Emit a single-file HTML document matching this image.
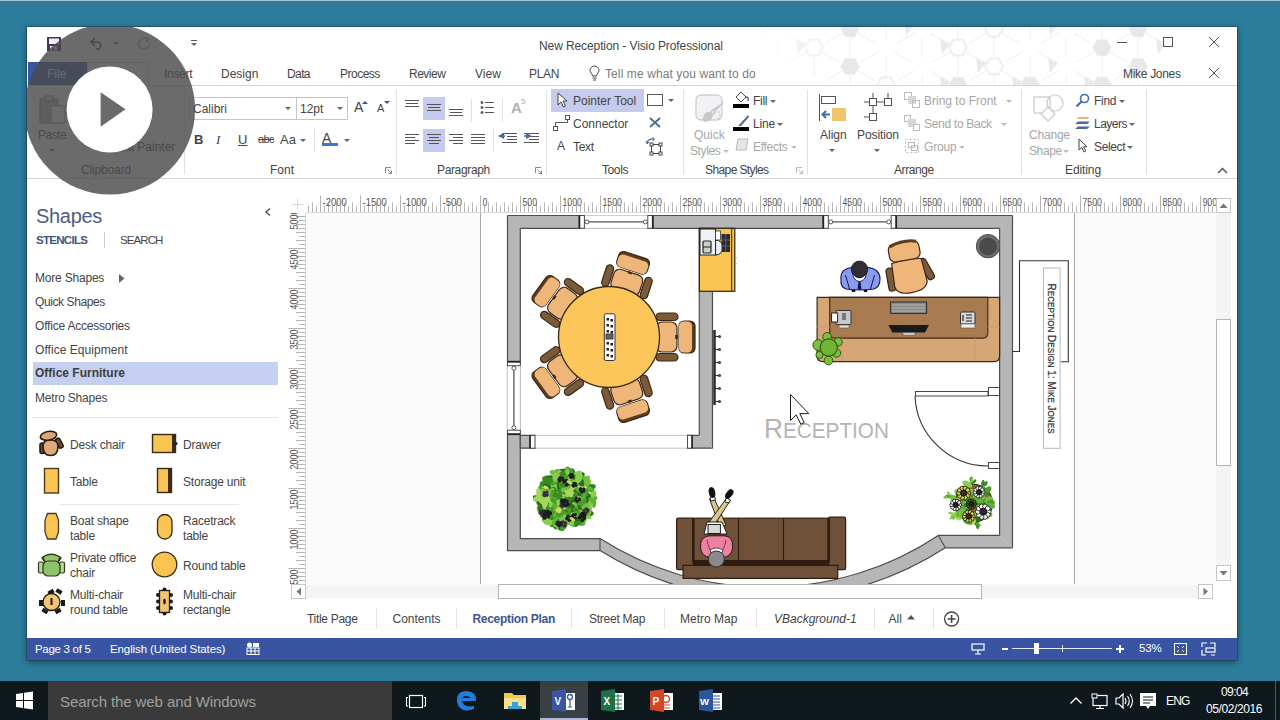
<!DOCTYPE html>
<html><head><meta charset="utf-8">
<style>
*{box-sizing:border-box}
html,body{margin:0;padding:0}
body{width:1280px;height:720px;overflow:hidden;position:relative;background:#2c7c9c;font-family:"Liberation Sans",sans-serif;color:#444}
.a{position:absolute}
.t{position:absolute;white-space:nowrap;line-height:1;font-size:12px;color:#444}
.g{color:#a6a6a6}
.sep{position:absolute;width:1px;background:#e1e1e1}
svg{position:absolute;overflow:visible}
.dd{position:absolute;width:0;height:0;border-left:3px solid transparent;border-right:3px solid transparent;border-top:3px solid #666}
</style></head><body>
<div class="a" style="left:0;top:0;width:1280px;height:1px;background:#9ccadc"></div>
<div class="a" style="left:0;top:1px;width:1280px;height:4px;background:#3a7792"></div>
<div class="a" style="left:0;top:5px;width:1280px;height:1px;background:#2a79a2"></div>
<!-- window -->
<div class="a" style="left:27px;top:27px;width:1210px;height:633px;background:#fff;box-shadow:0 0 0 1px rgba(20,40,50,.35),0 2px 7px rgba(0,0,0,.45)"></div>

<svg style="left:740px;top:27px" width="497" height="58" viewBox="740 27 497 58"><defs><clipPath id="hx"><rect x="740" y="27" width="497" height="58"/></clipPath><linearGradient id="hf" x1="0" x2="1"><stop offset="0" stop-color="#fff" stop-opacity="1"/><stop offset="0.2" stop-color="#fff" stop-opacity="0"/></linearGradient></defs><g clip-path="url(#hx)"><polygon points="751.0,10.0 746.5,17.8 737.5,17.8 733.0,10.0 737.5,2.2 746.5,2.2" fill="none" stroke="#eeeeee" stroke-width="2"/><polygon points="760,19.4 770,24.8 762,35.4" fill="#e9e9e9"/><polygon points="796,38.20000000000001 806,43.60000000000001 798,54.20000000000001" fill="#e9e9e9"/><polygon points="823.0,47.6 818.5,55.4 809.5,55.4 805.0,47.6 809.5,39.8 818.5,39.8" fill="none" stroke="#eeeeee" stroke-width="2"/><polygon points="859.5,28.8 854.8,37.0 845.2,37.0 840.5,28.8 845.2,20.6 854.8,20.6" fill="#e8e8e8"/><polygon points="859.5,66.4 854.8,74.6 845.2,74.6 840.5,66.4 845.2,58.2 854.8,58.2" fill="#e8e8e8"/><polygon points="895.5,10.0 890.8,18.2 881.2,18.2 876.5,10.0 881.2,1.8 890.8,1.8" fill="#e8e8e8"/><polygon points="904,19.4 914,24.8 906,35.4" fill="#e9e9e9"/><polygon points="895.0,10.0 890.5,17.8 881.5,17.8 877.0,10.0 881.5,2.2 890.5,2.2" fill="none" stroke="#eeeeee" stroke-width="2"/><polygon points="895.5,10.0 890.8,18.2 881.2,18.2 876.5,10.0 881.2,1.8 890.8,1.8" fill="#e8e8e8"/><polygon points="904,19.4 914,24.8 906,35.4" fill="#e9e9e9"/><polygon points="895.0,85.2 890.5,93.0 881.5,93.0 877.0,85.2 881.5,77.4 890.5,77.4" fill="none" stroke="#eeeeee" stroke-width="2"/><polygon points="940,38.199999999999996 950,43.599999999999994 942,54.199999999999996" fill="#e9e9e9"/><polygon points="940,75.80000000000001 950,81.2 942,91.80000000000001" fill="#e9e9e9"/><polygon points="931.5,104.0 926.8,112.2 917.2,112.2 912.5,104.0 917.2,95.8 926.8,95.8" fill="#e8e8e8"/><polygon points="940,113.4 950,118.8 942,129.4" fill="#e9e9e9"/><polygon points="967.0,10.0 962.5,17.8 953.5,17.8 949.0,10.0 953.5,2.2 962.5,2.2" fill="none" stroke="#eeeeee" stroke-width="2"/><polygon points="967.5,10.0 962.8,18.2 953.2,18.2 948.5,10.0 953.2,1.8 962.8,1.8" fill="#e8e8e8"/><polygon points="967.0,47.6 962.5,55.4 953.5,55.4 949.0,47.6 953.5,39.8 962.5,39.8" fill="none" stroke="#eeeeee" stroke-width="2"/><polygon points="976,57.0 986,62.400000000000006 978,73.0" fill="#e9e9e9"/><polygon points="967.5,85.2 962.8,93.4 953.2,93.4 948.5,85.2 953.2,77.0 962.8,77.0" fill="#e8e8e8"/><polygon points="976,94.60000000000001 986,100.0 978,110.60000000000001" fill="#e9e9e9"/><polygon points="1003.0,28.8 998.5,36.6 989.5,36.6 985.0,28.8 989.5,21.0 998.5,21.0" fill="none" stroke="#eeeeee" stroke-width="2"/><polygon points="1003.0,66.4 998.5,74.2 989.5,74.2 985.0,66.4 989.5,58.6 998.5,58.6" fill="none" stroke="#eeeeee" stroke-width="2"/><polygon points="1012,75.80000000000001 1022,81.2 1014,91.80000000000001" fill="#e9e9e9"/><polygon points="1003.5,104.0 998.8,112.2 989.2,112.2 984.5,104.0 989.2,95.8 998.8,95.8" fill="#e8e8e8"/><polygon points="1039.0,10.0 1034.5,17.8 1025.5,17.8 1021.0,10.0 1025.5,2.2 1034.5,2.2" fill="none" stroke="#eeeeee" stroke-width="2"/><polygon points="1048,19.4 1058,24.8 1050,35.4" fill="#e9e9e9"/><polygon points="1048,57.0 1058,62.400000000000006 1050,73.0" fill="#e9e9e9"/><polygon points="1039.0,85.2 1034.5,93.0 1025.5,93.0 1021.0,85.2 1025.5,77.4 1034.5,77.4" fill="none" stroke="#eeeeee" stroke-width="2"/><polygon points="1039.5,85.2 1034.8,93.4 1025.2,93.4 1020.5,85.2 1025.2,77.0 1034.8,77.0" fill="#e8e8e8"/><polygon points="1039.5,85.2 1034.8,93.4 1025.2,93.4 1020.5,85.2 1025.2,77.0 1034.8,77.0" fill="#e8e8e8"/><polygon points="1084,75.80000000000001 1094,81.2 1086,91.80000000000001" fill="#e9e9e9"/><polygon points="1075.0,104.0 1070.5,111.8 1061.5,111.8 1057.0,104.0 1061.5,96.2 1070.5,96.2" fill="none" stroke="#eeeeee" stroke-width="2"/><polygon points="1111.0,10.0 1106.5,17.8 1097.5,17.8 1093.0,10.0 1097.5,2.2 1106.5,2.2" fill="none" stroke="#eeeeee" stroke-width="2"/><polygon points="1111.5,47.6 1106.8,55.8 1097.2,55.8 1092.5,47.6 1097.2,39.4 1106.8,39.4" fill="#e8e8e8"/><polygon points="1120,94.60000000000002 1130,100.00000000000001 1122,110.60000000000002" fill="#e9e9e9"/><polygon points="1111.0,85.2 1106.5,93.0 1097.5,93.0 1093.0,85.2 1097.5,77.4 1106.5,77.4" fill="none" stroke="#eeeeee" stroke-width="2"/><polygon points="1111.5,85.2 1106.8,93.4 1097.2,93.4 1092.5,85.2 1097.2,77.0 1106.8,77.0" fill="#e8e8e8"/><polygon points="1147.5,28.8 1142.8,37.0 1133.2,37.0 1128.5,28.8 1133.2,20.6 1142.8,20.6" fill="#e8e8e8"/><polygon points="1156,38.199999999999996 1166,43.599999999999994 1158,54.199999999999996" fill="#e9e9e9"/><polygon points="1147.5,66.4 1142.8,74.6 1133.2,74.6 1128.5,66.4 1133.2,58.2 1142.8,58.2" fill="#e8e8e8"/><polygon points="1147.5,104.0 1142.8,112.2 1133.2,112.2 1128.5,104.0 1133.2,95.8 1142.8,95.8" fill="#e8e8e8"/><polygon points="1156,113.4 1166,118.8 1158,129.4" fill="#e9e9e9"/><polygon points="1147.0,104.0 1142.5,111.8 1133.5,111.8 1129.0,104.0 1133.5,96.2 1142.5,96.2" fill="none" stroke="#eeeeee" stroke-width="2"/><polygon points="1147.5,104.0 1142.8,112.2 1133.2,112.2 1128.5,104.0 1133.2,95.8 1142.8,95.8" fill="#e8e8e8"/><polygon points="1147.0,104.0 1142.5,111.8 1133.5,111.8 1129.0,104.0 1133.5,96.2 1142.5,96.2" fill="none" stroke="#eeeeee" stroke-width="2"/><path d="M749.8 14.5L766.8 24.3M742.0 19.0L742.0 38.6M734.2 14.5L717.2 24.3M785.8 33.3L802.8 43.1M778.0 37.8L778.0 57.4M770.2 33.3L753.2 43.1M821.8 52.1L838.8 61.9M814.0 56.6L814.0 76.2M806.2 52.1L789.2 61.9M857.8 33.3L874.8 43.1M850.0 37.8L850.0 57.4M842.2 33.3L825.2 43.1M857.8 70.9L874.8 80.7M850.0 75.4L850.0 95.0M842.2 70.9L825.2 80.7M893.8 14.5L910.8 24.3M886.0 19.0L886.0 38.6M878.2 14.5L861.2 24.3M893.8 14.5L910.8 24.3M886.0 19.0L886.0 38.6M878.2 14.5L861.2 24.3M893.8 14.5L910.8 24.3M886.0 19.0L886.0 38.6M878.2 14.5L861.2 24.3M893.8 52.1L910.8 61.9M886.0 56.6L886.0 76.2M878.2 52.1L861.2 61.9M893.8 89.7L910.8 99.5M886.0 94.2L886.0 113.8M878.2 89.7L861.2 99.5M929.8 33.3L946.8 43.1M922.0 37.8L922.0 57.4M914.2 33.3L897.2 43.1M929.8 70.9L946.8 80.7M922.0 75.4L922.0 95.0M914.2 70.9L897.2 80.7M929.8 108.5L946.8 118.3M922.0 113.0L922.0 132.6M914.2 108.5L897.2 118.3M965.8 14.5L982.8 24.3M958.0 19.0L958.0 38.6M950.2 14.5L933.2 24.3M965.8 14.5L982.8 24.3M958.0 19.0L958.0 38.6M950.2 14.5L933.2 24.3M965.8 14.5L982.8 24.3M958.0 19.0L958.0 38.6M950.2 14.5L933.2 24.3M965.8 52.1L982.8 61.9M958.0 56.6L958.0 76.2M950.2 52.1L933.2 61.9M965.8 89.7L982.8 99.5M958.0 94.2L958.0 113.8M950.2 89.7L933.2 99.5M965.8 89.7L982.8 99.5M958.0 94.2L958.0 113.8M950.2 89.7L933.2 99.5M1001.8 33.3L1018.8 43.1M994.0 37.8L994.0 57.4M986.2 33.3L969.2 43.1M1001.8 70.9L1018.8 80.7M994.0 75.4L994.0 95.0M986.2 70.9L969.2 80.7M1001.8 108.5L1018.8 118.3M994.0 113.0L994.0 132.6M986.2 108.5L969.2 118.3M1001.8 108.5L1018.8 118.3M994.0 113.0L994.0 132.6M986.2 108.5L969.2 118.3M1037.8 14.5L1054.8 24.3M1030.0 19.0L1030.0 38.6M1022.2 14.5L1005.2 24.3M1037.8 14.5L1054.8 24.3M1030.0 19.0L1030.0 38.6M1022.2 14.5L1005.2 24.3M1037.8 52.1L1054.8 61.9M1030.0 56.6L1030.0 76.2M1022.2 52.1L1005.2 61.9M1037.8 89.7L1054.8 99.5M1030.0 94.2L1030.0 113.8M1022.2 89.7L1005.2 99.5M1037.8 89.7L1054.8 99.5M1030.0 94.2L1030.0 113.8M1022.2 89.7L1005.2 99.5M1037.8 89.7L1054.8 99.5M1030.0 94.2L1030.0 113.8M1022.2 89.7L1005.2 99.5M1073.8 33.3L1090.8 43.1M1066.0 37.8L1066.0 57.4M1058.2 33.3L1041.2 43.1M1073.8 70.9L1090.8 80.7M1066.0 75.4L1066.0 95.0M1058.2 70.9L1041.2 80.7M1073.8 108.5L1090.8 118.3M1066.0 113.0L1066.0 132.6M1058.2 108.5L1041.2 118.3M1073.8 108.5L1090.8 118.3M1066.0 113.0L1066.0 132.6M1058.2 108.5L1041.2 118.3M1073.8 108.5L1090.8 118.3M1066.0 113.0L1066.0 132.6M1058.2 108.5L1041.2 118.3M1109.8 14.5L1126.8 24.3M1102.0 19.0L1102.0 38.6M1094.2 14.5L1077.2 24.3M1109.8 52.1L1126.8 61.9M1102.0 56.6L1102.0 76.2M1094.2 52.1L1077.2 61.9M1109.8 89.7L1126.8 99.5M1102.0 94.2L1102.0 113.8M1094.2 89.7L1077.2 99.5M1109.8 89.7L1126.8 99.5M1102.0 94.2L1102.0 113.8M1094.2 89.7L1077.2 99.5M1109.8 89.7L1126.8 99.5M1102.0 94.2L1102.0 113.8M1094.2 89.7L1077.2 99.5M1109.8 89.7L1126.8 99.5M1102.0 94.2L1102.0 113.8M1094.2 89.7L1077.2 99.5M1145.8 33.3L1162.8 43.1M1138.0 37.8L1138.0 57.4M1130.2 33.3L1113.2 43.1M1145.8 70.9L1162.8 80.7M1138.0 75.4L1138.0 95.0M1130.2 70.9L1113.2 80.7M1145.8 108.5L1162.8 118.3M1138.0 113.0L1138.0 132.6M1130.2 108.5L1113.2 118.3M1145.8 108.5L1162.8 118.3M1138.0 113.0L1138.0 132.6M1130.2 108.5L1113.2 118.3M1145.8 108.5L1162.8 118.3M1138.0 113.0L1138.0 132.6M1130.2 108.5L1113.2 118.3M1145.8 108.5L1162.8 118.3M1138.0 113.0L1138.0 132.6M1130.2 108.5L1113.2 118.3" stroke="#f2f2f2" stroke-width="1.2" fill="none"/><rect x="740" y="27" width="497" height="58" fill="url(#hf)"/></g></svg>

<!-- ===== TITLE BAR ===== -->
<svg style="left:47px;top:37px" width="14" height="14" viewBox="0 0 14 14"><rect x="0.75" y="0.75" width="12.5" height="12.5" fill="#45365e" stroke="#45365e" stroke-width="1.5"/><rect x="2" y="1.5" width="10" height="5.5" fill="#f4f0fa"/><rect x="3" y="9" width="7.5" height="4.5" fill="#e8e4ee"/><rect x="5" y="10.5" width="2" height="3" fill="#45365e"/></svg>
<svg style="left:89px;top:37px" width="16" height="13" viewBox="0 0 16 13"><path d="M3 5 H10 A4.5 4.5 0 0 1 10 12 H7" fill="none" stroke="#444" stroke-width="1.6"/><path d="M6 1 L2 5 L6 9" fill="none" stroke="#444" stroke-width="1.6"/></svg>
<div class="dd" style="left:113px;top:42px"></div>
<svg style="left:137px;top:37px" width="14" height="13" viewBox="0 0 14 13"><path d="M10 2 A5.5 5.5 0 1 0 12.5 6.5" fill="none" stroke="#aaa" stroke-width="1.5"/><path d="M9 0 L12 2.5 L9 5" fill="none" stroke="#aaa" stroke-width="1.4"/></svg>
<div class="a" style="left:191px;top:40px;width:6px;height:1px;background:#555"></div>
<div class="dd" style="left:191px;top:43px"></div>
<div class="t" style="left:539px;top:40px;letter-spacing:-0.1px">New Reception - Visio Professional</div>
<div class="a" style="left:1117px;top:42px;width:10px;height:1px;background:#555"></div>
<div class="a" style="left:1163px;top:37px;width:10px;height:10px;border:1px solid #555"></div>
<svg style="left:1209px;top:37px" width="10" height="10" viewBox="0 0 10 10"><path d="M0 0 L10 10 M10 0 L0 10" stroke="#555" stroke-width="1"/></svg>

<!-- ===== TABS ===== -->
<div class="a" style="left:28px;top:62px;width:59px;height:23px;background:#3955a3"></div>
<div class="t" style="left:47px;top:68px;color:#fff">File</div>
<div class="a" style="left:87px;top:62px;width:62px;height:24px;border:1px solid #d4d4d4;border-bottom:none;background:#fff"></div>
<div class="t" style="left:100px;top:68px;color:#3955a3">Home</div>
<div class="t" style="left:164px;top:68px;letter-spacing:-0.3px">Insert</div>
<div class="t" style="left:221px;top:68px">Design</div>
<div class="t" style="left:287px;top:68px;letter-spacing:-0.6px">Data</div>
<div class="t" style="left:340px;top:68px;letter-spacing:-0.5px">Process</div>
<div class="t" style="left:409px;top:68px;letter-spacing:-0.5px">Review</div>
<div class="t" style="left:475px;top:68px">View</div>
<div class="t" style="left:529px;top:68px;letter-spacing:-0.3px">PLAN</div>
<svg style="left:589px;top:66px" width="11" height="15" viewBox="0 0 11 15"><path d="M3.5 10 C3.5 7.5 1 6.5 1 4.5 A4.5 4.5 0 0 1 10 4.5 C10 6.5 7.5 7.5 7.5 10 Z" fill="none" stroke="#444" stroke-width="1"/><path d="M3.5 12 H7.5 M4 14 H7" stroke="#444" stroke-width="1"/></svg>
<div class="t" style="left:605px;top:68px;color:#7a7a7a;letter-spacing:0.1px">Tell me what you want to do</div>
<div class="t" style="left:1123px;top:68px;letter-spacing:-0.3px">Mike Jones</div>
<svg style="left:1209px;top:68px" width="10" height="10" viewBox="0 0 10 10"><path d="M0 0 L10 10 M10 0 L0 10" stroke="#555" stroke-width="1"/></svg>
<div class="a" style="left:27px;top:85px;width:60px;height:1px;background:#d4d4d4"></div>
<div class="a" style="left:149px;top:85px;width:1088px;height:1px;background:#d4d4d4"></div>

<!-- ===== RIBBON ===== -->
<div class="a" style="left:27px;top:178px;width:1210px;height:1px;background:#d4d4d4"></div>
<!-- separators -->
<div class="sep" style="left:184px;top:90px;height:84px"></div>
<div class="sep" style="left:396px;top:90px;height:84px"></div>
<div class="sep" style="left:546px;top:90px;height:84px"></div>
<div class="sep" style="left:683px;top:90px;height:84px"></div>
<div class="sep" style="left:807px;top:90px;height:84px"></div>
<div class="sep" style="left:1021px;top:90px;height:84px"></div>
<div class="sep" style="left:1146px;top:90px;height:84px"></div>

<!-- Clipboard -->
<svg style="left:39px;top:94px" width="28" height="30" viewBox="0 0 28 30"><rect x="1" y="5" width="18" height="24" fill="#b8b8b8" stroke="#888"/><rect x="6" y="2" width="8" height="5" fill="#ddd" stroke="#888"/><rect x="12" y="12" width="14" height="17" fill="#fff" stroke="#888"/></svg>
<div class="t" style="left:38px;top:129px;letter-spacing:-0.5px">Paste</div>
<div class="dd" style="left:49px;top:149px"></div>
<div class="t" style="left:101px;top:95px">Cut</div>
<div class="t" style="left:101px;top:118px">Copy</div>
<div class="t" style="left:96px;top:141px">Format Painter</div>
<div class="t" style="left:81px;top:164px;letter-spacing:-0.15px">Clipboard</div>

<!-- Font -->
<div class="a" style="left:189px;top:97px;width:108px;height:23px;border:1px solid #c6c6c6;background:#fff"></div>
<div class="a" style="left:296px;top:97px;width:52px;height:23px;border:1px solid #c6c6c6;background:#fff"></div>
<div class="t" style="left:193px;top:103px">Calibri</div>
<div class="t" style="left:300px;top:103px">12pt</div>
<div class="dd" style="left:285px;top:107px"></div>
<div class="dd" style="left:337px;top:107px"></div>
<div class="t" style="left:354px;top:100px;font-size:14px">A</div>
<div class="dd" style="left:362px;top:101px;border-top:none;border-bottom:3px solid #3955a3"></div>
<div class="t" style="left:377px;top:103px;font-size:11px">A</div>
<div class="dd" style="left:384px;top:101px;border-top-color:#3955a3"></div>
<div class="t" style="left:194px;top:133px;font-weight:bold;font-size:13px">B</div>
<div class="t" style="left:216px;top:133px;font-style:italic;font-size:13px;font-family:'Liberation Serif'">I</div>
<div class="t" style="left:238px;top:133px;text-decoration:underline;font-size:13px">U</div>
<div class="t" style="left:258px;top:134px;text-decoration:line-through;font-size:11px;letter-spacing:-0.6px">abc</div>
<div class="t" style="left:280px;top:133px;font-size:13px">Aa</div>
<div class="dd" style="left:300px;top:139px"></div>
<div class="sep" style="left:314px;top:129px;height:23px"></div>
<div class="t" style="left:322px;top:131px;font-size:14px">A</div>
<div class="a" style="left:322px;top:143px;width:16px;height:3px;background:#3b7ac8"></div>
<div class="dd" style="left:344px;top:139px"></div>
<div class="t" style="left:270px;top:164px">Font</div>
<svg style="left:385px;top:167px" width="7" height="7" viewBox="0 0 7 7"><path d="M0.5 6 V0.5 H6 M2.5 2.5 L6.5 6.5 M6.5 3.5 V6.5 H3.5" fill="none" stroke="#888" stroke-width="1"/></svg>

<!-- Paragraph -->
<div class="a" style="left:423px;top:97px;width:22px;height:23px;background:#c5cbee"></div>
<div class="a" style="left:423px;top:129px;width:22px;height:23px;background:#c5cbee"></div>
<svg style="left:404px;top:99px" width="140" height="56" viewBox="0 0 140 56" stroke="#555" stroke-width="1" fill="none">
<path d="M1 1.5H15M2 4.5H14M1 7.5H15"/>
<path d="M23 5.5H37M24 8.5H36M23 11.5H37"/>
<path d="M45 10.5H59M46 13.5H58M45 16.5H59"/>
<path d="M81 3.5H90M81 8.5H90M81 13.5H90"/><circle cx="78" cy="3.5" r="1" fill="#555"/><circle cx="78" cy="8.5" r="1" fill="#555"/><circle cx="78" cy="13.5" r="1" fill="#555"/>
<path d="M1 35.5H15M1 38.5H11M1 41.5H15M1 44.5H11"/>
<path d="M23 35.5H37M25 38.5H35M23 41.5H37M25 44.5H35"/>
<path d="M45 35.5H59M49 38.5H59M45 41.5H59M49 44.5H59"/>
<path d="M67 35.5H81M67 38.5H81M67 41.5H81M67 44.5H81"/>
<path d="M98 34.5H113M103 37.5H113M103 40.5H113M98 43.5H113"/>
<path d="M120 34.5H135M125 37.5H135M125 40.5H135M120 43.5H135"/>
</svg>
<svg style="left:496px;top:99px" width="80" height="56" viewBox="0 0 80 56"><path d="M8 40 L2 37 L8 34 Z" fill="#4a6a96"/><path d="M3 37 H9" stroke="#4a6a96" stroke-width="1.5"/><path d="M30 40 L36 37 L30 34 Z" fill="#4a6a96"/><path d="M28 37 H33" stroke="#4a6a96" stroke-width="1.5"/></svg>
<div class="sep" style="left:471px;top:99px;height:23px"></div>
<div class="sep" style="left:502px;top:99px;height:23px"></div>
<div class="sep" style="left:493px;top:129px;height:23px"></div>
<div class="t g" style="left:511px;top:100px;font-size:15px;font-weight:bold;color:#b0b0b0">A</div>
<div class="t g" style="left:521px;top:98px;font-size:8px;color:#b0b0b0">5</div>
<div class="t" style="left:437px;top:164px;letter-spacing:-0.35px">Paragraph</div>
<svg style="left:535px;top:167px" width="7" height="7" viewBox="0 0 7 7"><path d="M0.5 6 V0.5 H6 M2.5 2.5 L6.5 6.5 M6.5 3.5 V6.5 H3.5" fill="none" stroke="#888" stroke-width="1"/></svg>

<!-- Tools -->
<div class="a" style="left:551px;top:89px;width:93px;height:23px;background:#c5cbee"></div>
<svg style="left:557px;top:92px" width="11" height="16" viewBox="0 0 11 16"><path d="M1 1 V13 L4 10 L6.5 15 L8.5 14 L6 9 H10 Z" fill="#fff" stroke="#444" stroke-width="1"/></svg>
<div class="t" style="left:573px;top:95px">Pointer Tool</div>
<svg style="left:553px;top:115px" width="18" height="17" viewBox="0 0 18 17" fill="none" stroke="#555" stroke-width="1"><rect x="0.5" y="11.5" width="4" height="4"/><rect x="12.5" y="0.5" width="4" height="4"/><path d="M2.5 11.5 V7.5 H14.5 V4.5"/></svg>
<div class="t" style="left:573px;top:118px">Connector</div>
<div class="t" style="left:557px;top:140px;font-size:12px">A</div>
<div class="t" style="left:573px;top:141px;letter-spacing:-0.3px">Text</div>
<div class="a" style="left:647px;top:94px;width:16px;height:12px;border:1px solid #555"></div>
<div class="dd" style="left:668px;top:99px"></div>
<svg style="left:649px;top:117px" width="12" height="11" viewBox="0 0 12 11"><path d="M1 1 L11 10 M11 1 L1 10" stroke="#4a6a96" stroke-width="1.8"/></svg>
<svg style="left:646px;top:137px" width="18" height="18" viewBox="0 0 18 18" fill="none" stroke="#444" stroke-width="1"><rect x="5.5" y="7.5" width="9" height="9"/><rect x="4" y="6" width="3" height="3" fill="#fff"/><rect x="13" y="6" width="3" height="3" fill="#fff"/><rect x="4" y="15" width="3" height="3" fill="#fff"/><rect x="13" y="15" width="3" height="3" fill="#fff"/><path d="M1 6 Q2 1.5 8 2" stroke="#4a6a96" stroke-width="1.2"/><path d="M6.5 0 L8.5 2 L6.5 4" stroke="#4a6a96"/><path d="M0 4 L1 7 L3 5" stroke="#4a6a96"/></svg>
<div class="t" style="left:602px;top:164px;letter-spacing:-0.4px">Tools</div>

<!-- Shape Styles -->
<svg style="left:694px;top:93px" width="32" height="30" viewBox="0 0 32 30"><rect x="2" y="2" width="26" height="25" rx="5" fill="#f4f1f6" stroke="#cfcfcf" stroke-width="1.3"/><path d="M31 8 L21 19 L18.5 16.5 Z" fill="#c4c4c4"/><path d="M19 16 L22 19 L19 22 L16 19 Z" fill="#d8d8d8" stroke="#c4c4c4" stroke-width="0.8"/><path d="M16 19 Q10 18 9 25 Q8 28 11 29 Q18 28 19 22 Z" fill="#c8c8c8"/><path d="M24 18 Q28 22 24 26" fill="none" stroke="#c8c8c8" stroke-width="1.2" stroke-dasharray="2 1.5"/></svg>
<div class="t g" style="left:694px;top:129px">Quick</div>
<div class="t g" style="left:690px;top:145px;letter-spacing:-0.4px">Styles</div>
<div class="dd" style="left:723px;top:150px;border-top-color:#bbb"></div>
<svg style="left:733px;top:91px" width="18" height="18" viewBox="0 0 18 18"><path d="M3 6 L8 1 L13 6 L8 11 Z" fill="#fff" stroke="#444"/><path d="M13 6 Q16 6 15 10" fill="none" stroke="#4a6a96" stroke-width="1.5"/><rect x="0" y="13" width="16" height="4" fill="#000"/></svg>
<div class="t" style="left:753px;top:95px;letter-spacing:-0.3px">Fill</div>
<div class="dd" style="left:770px;top:100px"></div>
<svg style="left:733px;top:114px" width="18" height="18" viewBox="0 0 18 18"><path d="M15 1 L7 10 L5 12 L8 12 L16 3 Z" fill="#4a6a96"/><rect x="0" y="13" width="16" height="4" fill="#000"/></svg>
<div class="t" style="left:753px;top:118px;letter-spacing:-0.2px">Line</div>
<div class="dd" style="left:777px;top:123px"></div>
<svg style="left:734px;top:138px" width="16" height="14" viewBox="0 0 16 14"><path d="M4 1 H14 L12 12 H2 Z" fill="#e6e6e6" stroke="#bbb"/></svg>
<div class="t g" style="left:753px;top:141px;letter-spacing:-0.3px">Effects</div>
<div class="dd" style="left:791px;top:146px;border-top-color:#bbb"></div>
<div class="t" style="left:705px;top:164px;letter-spacing:-0.6px">Shape Styles</div>
<svg style="left:796px;top:167px" width="7" height="7" viewBox="0 0 7 7"><path d="M0.5 6 V0.5 H6 M2.5 2.5 L6.5 6.5 M6.5 3.5 V6.5 H3.5" fill="none" stroke="#bbb" stroke-width="1"/></svg>

<!-- Arrange -->
<svg style="left:818px;top:93px" width="30" height="30" viewBox="0 0 30 30"><path d="M1.5 1 V28" stroke="#555"/><rect x="3.5" y="3.5" width="14" height="7" fill="#fff" stroke="#555"/><rect x="14" y="15" width="14" height="13" fill="#f0c46a"/><path d="M5 21.5 H12" stroke="#3b6fb6" stroke-width="2"/><path d="M8 18 L4.5 21.5 L8 25" fill="none" stroke="#3b6fb6" stroke-width="2"/></svg>
<div class="t" style="left:820px;top:129px">Align</div>
<div class="dd" style="left:829px;top:149px"></div>
<svg style="left:862px;top:93px" width="34" height="30" viewBox="0 0 34 30" fill="none" stroke="#555" stroke-width="1"><rect x="7.5" y="5.5" width="7" height="7"/><rect x="22.5" y="5.5" width="7" height="7"/><rect x="7.5" y="20.5" width="7" height="7"/><path d="M14.5 9 H22.5 M11 12.5 V20.5 M11 0 V5.5 M26 0 V5.5 M2 9 H7.5 M2 24 H7.5"/></svg>
<div class="t" style="left:857px;top:129px;letter-spacing:-0.1px">Position</div>
<div class="dd" style="left:874px;top:149px"></div>
<svg style="left:904px;top:92px" width="17" height="16" viewBox="0 0 17 16"><rect x="0.5" y="0.5" width="7" height="7" fill="none" stroke="#bbb"/><rect x="4" y="4" width="8" height="8" fill="#d6d6d6"/><rect x="8.5" y="8.5" width="7" height="7" fill="none" stroke="#bbb"/></svg>
<div class="t g" style="left:924px;top:95px">Bring to Front</div>
<div class="dd" style="left:1006px;top:100px;border-top-color:#bbb"></div>
<svg style="left:904px;top:115px" width="17" height="16" viewBox="0 0 17 16"><rect x="0.5" y="0.5" width="6" height="6" fill="none" stroke="#bbb"/><rect x="4" y="4" width="8" height="8" fill="#d6d6d6"/><rect x="9.5" y="9.5" width="6" height="6" fill="#fff" stroke="#bbb"/></svg>
<div class="t g" style="left:924px;top:118px;letter-spacing:-0.3px">Send to Back</div>
<div class="dd" style="left:1001px;top:123px;border-top-color:#bbb"></div>
<svg style="left:904px;top:138px" width="17" height="16" viewBox="0 0 17 16" fill="none" stroke="#bbb"><rect x="1.5" y="1.5" width="13" height="13" stroke-dasharray="2 2"/><rect x="4.5" y="4.5" width="6" height="5"/><rect x="7.5" y="7.5" width="6" height="5"/></svg>
<div class="t g" style="left:924px;top:141px;letter-spacing:-0.2px">Group</div>
<div class="dd" style="left:959px;top:146px;border-top-color:#bbb"></div>
<div class="t" style="left:894px;top:164px;letter-spacing:-0.4px">Arrange</div>

<!-- Editing -->
<svg style="left:1033px;top:93px" width="32" height="30" viewBox="0 0 32 30" fill="none" stroke="#c9c9c9" stroke-width="1.2"><rect x="1" y="4" width="16" height="16"/><circle cx="22" cy="10" r="8"/><path d="M15 14 L22 21 L15 28 L8 21 Z" fill="#fff"/></svg>
<div class="t g" style="left:1029px;top:129px;letter-spacing:-0.2px">Change</div>
<div class="t g" style="left:1029px;top:145px;letter-spacing:-0.4px">Shape</div>
<div class="dd" style="left:1063px;top:150px;border-top-color:#bbb"></div>
<svg style="left:1075px;top:93px" width="15" height="15" viewBox="0 0 15 15"><circle cx="9.5" cy="5.5" r="4" fill="none" stroke="#3b6fb6" stroke-width="1.6"/><path d="M6.5 8.5 L1.5 13.5" stroke="#3b6fb6" stroke-width="2.2"/></svg>
<div class="t" style="left:1094px;top:95px;letter-spacing:-0.3px">Find</div>
<div class="dd" style="left:1119px;top:100px"></div>
<svg style="left:1074px;top:116px" width="17" height="15" viewBox="0 0 17 15"><path d="M2 3 L5 1 H16 L13 3 Z" fill="#e8b46a"/><path d="M1 8 L4 5.5 H16 L13 8 Z" fill="#4a6a96"/><path d="M1 13 L4 10.5 H16 L13 13 Z" fill="#4a6a96"/></svg>
<div class="t" style="left:1094px;top:118px;letter-spacing:-0.5px">Layers</div>
<div class="dd" style="left:1129px;top:123px"></div>
<svg style="left:1078px;top:138px" width="10" height="15" viewBox="0 0 10 15"><path d="M1 1 V12 L3.8 9.5 L6 14 L7.8 13 L5.6 8.8 H9 Z" fill="#fff" stroke="#444" stroke-width="1"/></svg>
<div class="t" style="left:1094px;top:141px;letter-spacing:-0.35px">Select</div>
<div class="dd" style="left:1127px;top:146px"></div>
<div class="t" style="left:1065px;top:164px;letter-spacing:-0.1px">Editing</div>
<svg style="left:1217px;top:167px" width="11" height="7" viewBox="0 0 11 7"><path d="M1 6 L5.5 1.5 L10 6" fill="none" stroke="#555" stroke-width="1.5"/></svg>


<!-- ===== SHAPES PANEL ===== -->
<div class="t" style="left:36px;top:206px;font-size:20px;color:#4f5d82;letter-spacing:-0.3px">Shapes</div>
<svg style="left:265px;top:208px" width="6" height="8" viewBox="0 0 6 8"><path d="M5 0.5 L1 4 L5 7.5" fill="none" stroke="#555" stroke-width="1.5"/></svg>
<div class="t" style="left:36px;top:235px;font-weight:bold;color:#44547e;letter-spacing:-0.7px;font-size:11.5px">STENCILS</div>
<div class="sep" style="left:104px;top:232px;height:16px;background:#ccc"></div>
<div class="t" style="left:120px;top:235px;letter-spacing:-0.9px;font-size:11.5px">SEARCH</div>
<div class="t" style="left:35px;top:272px;letter-spacing:-0.2px">More Shapes</div>
<svg style="left:119px;top:274px" width="6" height="9" viewBox="0 0 6 9"><path d="M0 0 L5.5 4.5 L0 9 Z" fill="#666"/></svg>
<div class="t" style="left:35px;top:296px;letter-spacing:-0.4px">Quick Shapes</div>
<div class="t" style="left:35px;top:320px;letter-spacing:-0.2px">Office Accessories</div>
<div class="t" style="left:35px;top:344px;letter-spacing:0.05px">Office Equipment</div>
<div class="a" style="left:33px;top:362px;width:245px;height:23px;background:#c5d0f0"></div>
<div class="t" style="left:35px;top:367px;font-weight:bold;color:#3d3d3d;letter-spacing:0px">Office Furniture</div>
<div class="t" style="left:35px;top:392px;letter-spacing:-0.2px">Metro Shapes</div>
<div class="a" style="left:32px;top:417px;width:246px;height:1px;background:#e3e3e3"></div>
<div class="a" style="left:60px;top:504px;width:179px;height:1px;background:#e6e6e6"></div>

<svg style="left:0;top:0" width="280" height="640" viewBox="0 0 280 640">
<!-- desk chair -->
<g stroke="#2a1a0a" stroke-width="1.6">
<rect x="40" y="443" width="4.5" height="10.5" rx="2" fill="#6b4a30"/>
<rect x="57" y="438" width="4.5" height="10.5" rx="2" fill="#6b4a30" transform="rotate(-28 59 443)"/>
<path d="M43 446 Q43 440 50.5 440 Q58 440 58 446 Q58 455.5 50.5 455.5 Q43 455.5 43 446 Z" fill="#dfa97a"/>
<ellipse cx="48.5" cy="435.8" rx="8.3" ry="4.3" fill="#d9a87a" transform="rotate(-10 48.5 435.8)"/>
</g>
<!-- table -->
<rect x="44.5" y="468.5" width="14" height="24.5" fill="#f9c452" stroke="#4a3a22" stroke-width="1.4"/>
<!-- drawer -->
<rect x="152.5" y="434.5" width="23" height="18" fill="#f9c452" stroke="#3a2a1a" stroke-width="1.4"/>
<rect x="172" y="434.5" width="4" height="18" fill="#3a2a1a"/><circle cx="176" cy="443.5" r="1.5" fill="#1a1a1a"/>
<!-- storage -->
<rect x="157.5" y="468.5" width="14" height="24" fill="#f9c452" stroke="#3a2a1a" stroke-width="1.4"/>
<rect x="168" y="468.5" width="3.5" height="24" fill="#3a2a1a"/>
<!-- boat -->
<path d="M47.5 513.5 H56 L58.5 520 V532 L56 539 H47.5 L45 532 V520 Z" fill="#f9c452" stroke="#4a3a22" stroke-width="1.3"/>
<!-- racetrack -->
<rect x="157.5" y="514.5" width="14.5" height="24.5" rx="7.2" fill="#f9c452" stroke="#3a2a1a" stroke-width="1.3"/>
<!-- private office chair -->
<g stroke="#2a3a1a" stroke-width="1.2">
<path d="M42 558 Q51 550 61 558 L59 561 H44 Z" fill="#2f4a20"/>
<path d="M43 557 Q51 552 60 557 L58 562 H45 Z" fill="#94c46e"/>
<rect x="38.5" y="562" width="5" height="11" rx="1.5" fill="#b6d890"/>
<rect x="59.5" y="562" width="5" height="11" rx="1.5" fill="#b6d890"/>
<rect x="43" y="561" width="17" height="15" rx="5" fill="#8cc26a"/>
</g>
<!-- round table -->
<circle cx="164.5" cy="564.5" r="12.3" fill="#f9c452" stroke="#3a2a1a" stroke-width="1.3"/>
<!-- multi-chair round -->
<g fill="#1e1a14">
<rect x="48" y="590" width="6" height="4" transform="rotate(-30 51 592)"/><rect x="56" y="589.5" width="6" height="4" transform="rotate(30 59 591.5)"/>
<rect x="39" y="600" width="4" height="6"/><rect x="61" y="600" width="4" height="6"/>
<rect x="42" y="609" width="6" height="4" transform="rotate(30 45 611)"/><rect x="55" y="609" width="6" height="4" transform="rotate(-30 58 611)"/>
</g>
<circle cx="51.5" cy="602" r="8.5" fill="#f1c572" stroke="#1e1a14" stroke-width="1.3"/>
<rect x="50.5" y="598" width="2" height="7" fill="#1e1a14"/>
<!-- multi-chair rect -->
<g fill="#1e1a14"><circle cx="164.5" cy="589.5" r="2"/><circle cx="164.5" cy="613.5" r="2"/><circle cx="158" cy="595" r="2"/><circle cx="158" cy="601.5" r="2"/><circle cx="158" cy="608" r="2"/><circle cx="171" cy="595" r="2"/><circle cx="171" cy="601.5" r="2"/><circle cx="171" cy="608" r="2"/></g>
<rect x="159.5" y="590.5" width="10" height="22" fill="#f1c572" stroke="#1e1a14" stroke-width="1.3"/>
<ellipse cx="164.5" cy="601.5" rx="1.3" ry="3" fill="#1e1a14"/>
</svg>
<div class="t" style="left:70px;top:439px;letter-spacing:-0.2px">Desk chair</div>
<div class="t" style="left:183px;top:439px;letter-spacing:-0.2px">Drawer</div>
<div class="t" style="left:70px;top:476px;letter-spacing:-0.2px">Table</div>
<div class="t" style="left:183px;top:476px;letter-spacing:-0.2px">Storage unit</div>
<div class="t" style="left:70px;top:515px;letter-spacing:-0.2px">Boat shape</div>
<div class="t" style="left:70px;top:530px;letter-spacing:-0.2px">table</div>
<div class="t" style="left:183px;top:515px;letter-spacing:-0.2px">Racetrack</div>
<div class="t" style="left:183px;top:530px;letter-spacing:-0.2px">table</div>
<div class="t" style="left:70px;top:552px;letter-spacing:-0.2px">Private office</div>
<div class="t" style="left:70px;top:567px;letter-spacing:-0.2px">chair</div>
<div class="t" style="left:183px;top:560px;letter-spacing:-0.2px">Round table</div>
<div class="t" style="left:70px;top:589px;letter-spacing:-0.2px">Multi-chair</div>
<div class="t" style="left:70px;top:604px;letter-spacing:-0.2px">round table</div>
<div class="t" style="left:183px;top:589px;letter-spacing:-0.2px">Multi-chair</div>
<div class="t" style="left:183px;top:604px;letter-spacing:-0.2px">rectangle</div>
<!-- PANEL_END -->

<div class="a" style="left:285px;top:179px;width:952px;height:459px;background:#fff"></div>
<div class="a" style="left:306px;top:213px;width:910px;height:371px;background:#fbfbfb"></div>
<div class="a" style="left:480px;top:213px;width:595px;height:371px;background:#fff;border-left:1px solid #a8a8a8;border-right:1px solid #a8a8a8"></div>
<svg style="left:0;top:0" width="1280" height="720" viewBox="0 0 1280 720">
<rect x="306" y="192" width="910" height="21" fill="#fff"/>
<rect x="287" y="213" width="19" height="371" fill="#fff"/>
<path d="M306 212.5 H1216" stroke="#d8d8d8" stroke-width="1"/>
<path d="M305.5 213 V584" stroke="#d0d0d0" stroke-width="1"/>
<path d="M308.5 206V212 M312.5 202.5V212 M316.5 206V212 M320.5 195.5V212 M324.5 206V212 M328.5 202.5V212 M332.5 206V212 M336.5 202.5V212 M340.5 206V212 M344.5 202.5V212 M348.5 206V212 M352.5 202.5V212 M356.5 206V212 M360.5 195.5V212 M364.5 206V212 M368.5 202.5V212 M372.5 206V212 M376.5 202.5V212 M380.5 206V212 M384.5 202.5V212 M388.5 206V212 M392.5 202.5V212 M396.5 206V212 M400.5 195.5V212 M404.5 206V212 M408.5 202.5V212 M412.5 206V212 M416.5 202.5V212 M420.5 206V212 M424.5 202.5V212 M428.5 206V212 M432.5 202.5V212 M436.5 206V212 M440.5 195.5V212 M444.5 206V212 M448.5 202.5V212 M452.5 206V212 M456.5 202.5V212 M460.5 206V212 M464.5 202.5V212 M468.5 206V212 M472.5 202.5V212 M476.5 206V212 M480.5 195.5V212 M484.5 206V212 M488.5 202.5V212 M492.5 206V212 M496.5 202.5V212 M500.5 206V212 M504.5 202.5V212 M508.5 206V212 M512.5 202.5V212 M516.5 206V212 M520.5 195.5V212 M524.5 206V212 M528.5 202.5V212 M532.5 206V212 M536.5 202.5V212 M540.5 206V212 M544.5 202.5V212 M548.5 206V212 M552.5 202.5V212 M556.5 206V212 M560.5 195.5V212 M564.5 206V212 M568.5 202.5V212 M572.5 206V212 M576.5 202.5V212 M580.5 206V212 M584.5 202.5V212 M588.5 206V212 M592.5 202.5V212 M596.5 206V212 M600.5 195.5V212 M604.5 206V212 M608.5 202.5V212 M612.5 206V212 M616.5 202.5V212 M620.5 206V212 M624.5 202.5V212 M628.5 206V212 M632.5 202.5V212 M636.5 206V212 M640.5 195.5V212 M644.5 206V212 M648.5 202.5V212 M652.5 206V212 M656.5 202.5V212 M660.5 206V212 M664.5 202.5V212 M668.5 206V212 M672.5 202.5V212 M676.5 206V212 M680.5 195.5V212 M684.5 206V212 M688.5 202.5V212 M692.5 206V212 M696.5 202.5V212 M700.5 206V212 M704.5 202.5V212 M708.5 206V212 M712.5 202.5V212 M716.5 206V212 M720.5 195.5V212 M724.5 206V212 M728.5 202.5V212 M732.5 206V212 M736.5 202.5V212 M740.5 206V212 M744.5 202.5V212 M748.5 206V212 M752.5 202.5V212 M756.5 206V212 M760.5 195.5V212 M764.5 206V212 M768.5 202.5V212 M772.5 206V212 M776.5 202.5V212 M780.5 206V212 M784.5 202.5V212 M788.5 206V212 M792.5 202.5V212 M796.5 206V212 M800.5 195.5V212 M804.5 206V212 M808.5 202.5V212 M812.5 206V212 M816.5 202.5V212 M820.5 206V212 M824.5 202.5V212 M828.5 206V212 M832.5 202.5V212 M836.5 206V212 M840.5 195.5V212 M844.5 206V212 M848.5 202.5V212 M852.5 206V212 M856.5 202.5V212 M860.5 206V212 M864.5 202.5V212 M868.5 206V212 M872.5 202.5V212 M876.5 206V212 M880.5 195.5V212 M884.5 206V212 M888.5 202.5V212 M892.5 206V212 M896.5 202.5V212 M900.5 206V212 M904.5 202.5V212 M908.5 206V212 M912.5 202.5V212 M916.5 206V212 M920.5 195.5V212 M924.5 206V212 M928.5 202.5V212 M932.5 206V212 M936.5 202.5V212 M940.5 206V212 M944.5 202.5V212 M948.5 206V212 M952.5 202.5V212 M956.5 206V212 M960.5 195.5V212 M964.5 206V212 M968.5 202.5V212 M972.5 206V212 M976.5 202.5V212 M980.5 206V212 M984.5 202.5V212 M988.5 206V212 M992.5 202.5V212 M996.5 206V212 M1000.5 195.5V212 M1004.5 206V212 M1008.5 202.5V212 M1012.5 206V212 M1016.5 202.5V212 M1020.5 206V212 M1024.5 202.5V212 M1028.5 206V212 M1032.5 202.5V212 M1036.5 206V212 M1040.5 195.5V212 M1044.5 206V212 M1048.5 202.5V212 M1052.5 206V212 M1056.5 202.5V212 M1060.5 206V212 M1064.5 202.5V212 M1068.5 206V212 M1072.5 202.5V212 M1076.5 206V212 M1080.5 195.5V212 M1084.5 206V212 M1088.5 202.5V212 M1092.5 206V212 M1096.5 202.5V212 M1100.5 206V212 M1104.5 202.5V212 M1108.5 206V212 M1112.5 202.5V212 M1116.5 206V212 M1120.5 195.5V212 M1124.5 206V212 M1128.5 202.5V212 M1132.5 206V212 M1136.5 202.5V212 M1140.5 206V212 M1144.5 202.5V212 M1148.5 206V212 M1152.5 202.5V212 M1156.5 206V212 M1160.5 195.5V212 M1164.5 206V212 M1168.5 202.5V212 M1172.5 206V212 M1176.5 202.5V212 M1180.5 206V212 M1184.5 202.5V212 M1188.5 206V212 M1192.5 202.5V212 M1196.5 206V212 M1200.5 195.5V212 M1204.5 206V212 M1208.5 202.5V212 M1212.5 206V212" stroke="#b4b4b4" stroke-width="1"/>
<g font-family="Liberation Sans" font-size="10" fill="#555" clip-path="url(#hclip)"><text x="322.5" y="205.8" textLength="24.2" lengthAdjust="spacingAndGlyphs">-2000</text><text x="362.5" y="205.8" textLength="24.2" lengthAdjust="spacingAndGlyphs">-1500</text><text x="402.5" y="205.8" textLength="24.2" lengthAdjust="spacingAndGlyphs">-1000</text><text x="442.5" y="205.8" textLength="19.4" lengthAdjust="spacingAndGlyphs">-500</text><text x="482.5" y="205.8" textLength="4.8" lengthAdjust="spacingAndGlyphs">0</text><text x="522.5" y="205.8" textLength="14.5" lengthAdjust="spacingAndGlyphs">500</text><text x="562.5" y="205.8" textLength="19.4" lengthAdjust="spacingAndGlyphs">1000</text><text x="602.5" y="205.8" textLength="19.4" lengthAdjust="spacingAndGlyphs">1500</text><text x="642.5" y="205.8" textLength="19.4" lengthAdjust="spacingAndGlyphs">2000</text><text x="682.5" y="205.8" textLength="19.4" lengthAdjust="spacingAndGlyphs">2500</text><text x="722.5" y="205.8" textLength="19.4" lengthAdjust="spacingAndGlyphs">3000</text><text x="762.5" y="205.8" textLength="19.4" lengthAdjust="spacingAndGlyphs">3500</text><text x="802.5" y="205.8" textLength="19.4" lengthAdjust="spacingAndGlyphs">4000</text><text x="842.5" y="205.8" textLength="19.4" lengthAdjust="spacingAndGlyphs">4500</text><text x="882.5" y="205.8" textLength="19.4" lengthAdjust="spacingAndGlyphs">5000</text><text x="922.5" y="205.8" textLength="19.4" lengthAdjust="spacingAndGlyphs">5500</text><text x="962.5" y="205.8" textLength="19.4" lengthAdjust="spacingAndGlyphs">6000</text><text x="1002.5" y="205.8" textLength="19.4" lengthAdjust="spacingAndGlyphs">6500</text><text x="1042.5" y="205.8" textLength="19.4" lengthAdjust="spacingAndGlyphs">7000</text><text x="1082.5" y="205.8" textLength="19.4" lengthAdjust="spacingAndGlyphs">7500</text><text x="1122.5" y="205.8" textLength="19.4" lengthAdjust="spacingAndGlyphs">8000</text><text x="1162.5" y="205.8" textLength="19.4" lengthAdjust="spacingAndGlyphs">8500</text><text x="1202.5" y="205.8" textLength="19.4" lengthAdjust="spacingAndGlyphs">9000</text></g>
<clipPath id="hclip"><rect x="306" y="192" width="910" height="21"/></clipPath>
<clipPath id="vclip"><rect x="287" y="213" width="19" height="371"/></clipPath>
<path d="M299 580.5H305 M296 576.5H305 M299 572.5H305 M288.5 568.5H305 M299 564.5H305 M296 560.5H305 M299 556.5H305 M296 552.5H305 M299 548.5H305 M296 544.5H305 M299 540.5H305 M296 536.5H305 M299 532.5H305 M288.5 528.5H305 M299 524.5H305 M296 520.5H305 M299 516.5H305 M296 512.5H305 M299 508.5H305 M296 504.5H305 M299 500.5H305 M296 496.5H305 M299 492.5H305 M288.5 488.5H305 M299 484.5H305 M296 480.5H305 M299 476.5H305 M296 472.5H305 M299 468.5H305 M296 464.5H305 M299 460.5H305 M296 456.5H305 M299 452.5H305 M288.5 448.5H305 M299 444.5H305 M296 440.5H305 M299 436.5H305 M296 432.5H305 M299 428.5H305 M296 424.5H305 M299 420.5H305 M296 416.5H305 M299 412.5H305 M288.5 408.5H305 M299 404.5H305 M296 400.5H305 M299 396.5H305 M296 392.5H305 M299 388.5H305 M296 384.5H305 M299 380.5H305 M296 376.5H305 M299 372.5H305 M288.5 368.5H305 M299 364.5H305 M296 360.5H305 M299 356.5H305 M296 352.5H305 M299 348.5H305 M296 344.5H305 M299 340.5H305 M296 336.5H305 M299 332.5H305 M288.5 328.5H305 M299 324.5H305 M296 320.5H305 M299 316.5H305 M296 312.5H305 M299 308.5H305 M296 304.5H305 M299 300.5H305 M296 296.5H305 M299 292.5H305 M288.5 288.5H305 M299 284.5H305 M296 280.5H305 M299 276.5H305 M296 272.5H305 M299 268.5H305 M296 264.5H305 M299 260.5H305 M296 256.5H305 M299 252.5H305 M288.5 248.5H305 M299 244.5H305 M296 240.5H305 M299 236.5H305 M296 232.5H305 M299 228.5H305 M296 224.5H305 M299 220.5H305 M296 216.5H305" stroke="#b4b4b4" stroke-width="1"/>
<g font-family="Liberation Sans" font-size="10" fill="#555" clip-path="url(#vclip)"><text transform="translate(297.8 609.5) rotate(-90)" text-anchor="end" textLength="5.0" lengthAdjust="spacingAndGlyphs">0</text><text transform="translate(297.8 569.5) rotate(-90)" text-anchor="end" textLength="15.0" lengthAdjust="spacingAndGlyphs">500</text><text transform="translate(297.8 529.5) rotate(-90)" text-anchor="end" textLength="20.0" lengthAdjust="spacingAndGlyphs">1000</text><text transform="translate(297.8 489.5) rotate(-90)" text-anchor="end" textLength="20.0" lengthAdjust="spacingAndGlyphs">1500</text><text transform="translate(297.8 449.5) rotate(-90)" text-anchor="end" textLength="20.0" lengthAdjust="spacingAndGlyphs">2000</text><text transform="translate(297.8 409.5) rotate(-90)" text-anchor="end" textLength="20.0" lengthAdjust="spacingAndGlyphs">2500</text><text transform="translate(297.8 369.5) rotate(-90)" text-anchor="end" textLength="20.0" lengthAdjust="spacingAndGlyphs">3000</text><text transform="translate(297.8 329.5) rotate(-90)" text-anchor="end" textLength="20.0" lengthAdjust="spacingAndGlyphs">3500</text><text transform="translate(297.8 289.5) rotate(-90)" text-anchor="end" textLength="20.0" lengthAdjust="spacingAndGlyphs">4000</text><text transform="translate(297.8 249.5) rotate(-90)" text-anchor="end" textLength="20.0" lengthAdjust="spacingAndGlyphs">4500</text><text transform="translate(297.8 209.5) rotate(-90)" text-anchor="end" textLength="20.0" lengthAdjust="spacingAndGlyphs">5000</text></g>
<path d="M292 204.5H303M297.5 199V210" stroke="#d4dae8" stroke-width="1"/>
<rect x="1216" y="213" width="15" height="353" fill="#f4f4f4"/>
<rect x="1216.5" y="198.5" width="14" height="14" fill="#fff" stroke="#c6c6c6"/>
<path d="M1219.5 208 L1223.5 203.5 L1227.5 208 Z" fill="#777"/>
<rect x="1216.5" y="319.5" width="14" height="146" fill="#fff" stroke="#b4b4b4"/>
<rect x="1216.5" y="565.5" width="14" height="15" fill="#fff" stroke="#c6c6c6"/>
<path d="M1219.5 571 L1223.5 575.5 L1227.5 571 Z" fill="#777"/>
<rect x="306" y="584.5" width="893" height="14" fill="#f4f4f4"/>
<rect x="291.5" y="584.5" width="14" height="14" fill="#fff" stroke="#c6c6c6"/>
<path d="M301 587.5 L296.5 591.5 L301 595.5 Z" fill="#777"/>
<rect x="498.5" y="584.5" width="483" height="14" fill="#fff" stroke="#b4b4b4"/>
<rect x="1198.5" y="584.5" width="14" height="14" fill="#fff" stroke="#c6c6c6"/>
<path d="M1203.5 587.5 L1208 591.5 L1203.5 595.5 Z" fill="#777"/>
</svg>
<svg style="left:0;top:0" width="1280" height="720" viewBox="0 0 1280 720">
<defs><clipPath id="cv"><rect x="306" y="213" width="910" height="371"/></clipPath></defs>
<g clip-path="url(#cv)">
<path fill-rule="evenodd" fill="#b6b6b6" stroke="#4d4d4d" stroke-width="1.2" d="M507.5 215.5 H1012.5 V547.8 H945.3 A322 322 0 0 1 600 550.6 H507.5 Z M520.3 228.3 H999.6 V535.4 H938.3 A310 310 0 0 1 600 538.6 H520.3 Z"/>
<path d="M600 538.6V550.6 M938.3 535.4 L945.3 547.8" stroke="#4d4d4d" stroke-width="1.1"/>
<path fill="#b6b6b6" stroke="#4d4d4d" stroke-width="1.2" d="M699.3 228.3 H712.5 V448.2 H687.5 V435.4 H699.3 Z"/>
<path fill="#b6b6b6" stroke="#4d4d4d" stroke-width="1.2" d="M520.3 435.4 H535 V448.2 H520.3 Z"/>
<path d="M507.5 215.5 L520.3 228.3 M1012.5 215.5 L999.6 228.3 M1012.5 547.8 L999.6 535.4 M712.5 448.2 L699.3 435.4" stroke="#c2c2c2" stroke-width="0.8"/>
<rect x="579.4" y="215.5" width="73.39999999999998" height="12.800000000000011" fill="#fff"/>
<path d="M584.4 215.5H647.8M584.4 228.3H647.8" stroke="#cfcfcf" stroke-width="1"/>
<rect x="579.4" y="215.5" width="5" height="12.800000000000011" fill="#fff" stroke="#4d4d4d" stroke-width="1"/>
<path d="M579.4 215.5V228.3" stroke="#222" stroke-width="1.8"/>
<rect x="647.8" y="215.5" width="5" height="12.800000000000011" fill="#fff" stroke="#4d4d4d" stroke-width="1"/>
<path d="M652.8 215.5V228.3" stroke="#222" stroke-width="1.8"/>
<path d="M587.4 221.9H644.8" stroke="#555" stroke-width="1.3"/>
<circle cx="586.9" cy="221.9" r="2" fill="#fff" stroke="#555" stroke-width="1"/><circle cx="645.3" cy="221.9" r="2" fill="#fff" stroke="#555" stroke-width="1"/>
<rect x="823.3" y="215.5" width="72.90000000000009" height="12.800000000000011" fill="#fff"/>
<path d="M828.3 215.5H891.2M828.3 228.3H891.2" stroke="#cfcfcf" stroke-width="1"/>
<rect x="823.3" y="215.5" width="5" height="12.800000000000011" fill="#fff" stroke="#4d4d4d" stroke-width="1"/>
<path d="M823.3 215.5V228.3" stroke="#222" stroke-width="1.8"/>
<rect x="891.2" y="215.5" width="5" height="12.800000000000011" fill="#fff" stroke="#4d4d4d" stroke-width="1"/>
<path d="M896.2 215.5V228.3" stroke="#222" stroke-width="1.8"/>
<path d="M831.3 221.9H888.2" stroke="#555" stroke-width="1.3"/>
<circle cx="830.8" cy="221.9" r="2" fill="#fff" stroke="#555" stroke-width="1"/><circle cx="888.7" cy="221.9" r="2" fill="#fff" stroke="#555" stroke-width="1"/>
<rect x="507.5" y="361.7" width="12.799999999999955" height="72.5" fill="#fff"/>
<path d="M507.5 365.7V430.2M520.3 365.7V430.2" stroke="#d0d0d0" stroke-width="1"/>
<rect x="507.5" y="361.7" width="12.799999999999955" height="4" fill="#fff" stroke="#4d4d4d" stroke-width="1"/>
<path d="M507.5 361.7H520.3" stroke="#222" stroke-width="1.8"/>
<rect x="507.5" y="430.2" width="12.799999999999955" height="4" fill="#fff" stroke="#4d4d4d" stroke-width="1"/>
<path d="M507.5 434.2H520.3" stroke="#222" stroke-width="1.8"/>
<path d="M513.9 368.7V427.2" stroke="#555" stroke-width="1.3"/>
<circle cx="513.9" cy="368.2" r="2" fill="#fff" stroke="#555"/><circle cx="513.9" cy="427.7" r="2" fill="#fff" stroke="#555"/>
<rect x="535" y="435.4" width="152.5" height="12.8" fill="#fff"/>
<path d="M535 435.4H687.5M535 448.2H687.5" stroke="#c4c4c4" stroke-width="1"/>
<rect x="530" y="435.4" width="5" height="12.8" fill="#fff" stroke="#4d4d4d" stroke-width="1"/><path d="M530 435.4V448.2" stroke="#222" stroke-width="1.6"/>
<rect x="687.5" y="435.4" width="4.6" height="12.8" fill="#fff" stroke="#4d4d4d" stroke-width="1"/><path d="M692.1 435.4V448.2" stroke="#222" stroke-width="1.6"/>
<path d="M714.5 330V405" stroke="#2a2a2a" stroke-width="2.5"/>
<path d="M715 336.5H719" stroke="#333" stroke-width="1.2"/><circle cx="719.5" cy="336.5" r="1.6" fill="#444"/>
<path d="M715 349.5H719" stroke="#333" stroke-width="1.2"/><circle cx="719.5" cy="349.5" r="1.6" fill="#444"/>
<path d="M715 362.5H719" stroke="#333" stroke-width="1.2"/><circle cx="719.5" cy="362.5" r="1.6" fill="#444"/>
<path d="M715 375.5H719" stroke="#333" stroke-width="1.2"/><circle cx="719.5" cy="375.5" r="1.6" fill="#444"/>
<path d="M715 388.5H719" stroke="#333" stroke-width="1.2"/><circle cx="719.5" cy="388.5" r="1.6" fill="#444"/>
<path d="M715 401.5H719" stroke="#333" stroke-width="1.2"/><circle cx="719.5" cy="401.5" r="1.6" fill="#444"/>
<path d="M915 396 A73 73 0 0 0 988 466" fill="none" stroke="#333" stroke-width="1.1"/>
<rect x="915.5" y="391.5" width="72.5" height="4.5" fill="#fff" stroke="#444" stroke-width="1"/>
<rect x="988.5" y="387.5" width="11" height="8" fill="#fff" stroke="#444" stroke-width="1"/>
<rect x="988.5" y="462.5" width="11" height="6" fill="#fff" stroke="#444" stroke-width="1"/>
<g transform="translate(609 337) rotate(0)" stroke="#3b2814" stroke-width="1.2"><rect x="47" y="-24" width="22" height="7.5" rx="3.7" fill="#7b5a3a"/><rect x="47" y="16.5" width="22" height="7.5" rx="3.7" fill="#7b5a3a"/><rect x="47" y="-15" width="21" height="30" rx="6" fill="#efb679"/><rect x="70" y="-16" width="16" height="32" rx="5" fill="#5c3d20"/><rect x="70" y="-15.5" width="13" height="31" rx="4.5" fill="#efb679" stroke="none"/><path d="M67.5 -2V2" stroke="#3b2814" stroke-width="2.5"/></g>
<g transform="translate(609 337) rotate(-72)" stroke="#3b2814" stroke-width="1.2"><rect x="47" y="-24" width="22" height="7.5" rx="3.7" fill="#7b5a3a"/><rect x="47" y="16.5" width="22" height="7.5" rx="3.7" fill="#7b5a3a"/><rect x="47" y="-15" width="21" height="30" rx="6" fill="#efb679"/><rect x="70" y="-16" width="16" height="32" rx="5" fill="#5c3d20"/><rect x="70" y="-15.5" width="13" height="31" rx="4.5" fill="#efb679" stroke="none"/><path d="M67.5 -2V2" stroke="#3b2814" stroke-width="2.5"/></g>
<g transform="translate(609 337) rotate(-144)" stroke="#3b2814" stroke-width="1.2"><rect x="47" y="-24" width="22" height="7.5" rx="3.7" fill="#7b5a3a"/><rect x="47" y="16.5" width="22" height="7.5" rx="3.7" fill="#7b5a3a"/><rect x="47" y="-15" width="21" height="30" rx="6" fill="#efb679"/><rect x="70" y="-16" width="16" height="32" rx="5" fill="#5c3d20"/><rect x="70" y="-15.5" width="13" height="31" rx="4.5" fill="#efb679" stroke="none"/><path d="M67.5 -2V2" stroke="#3b2814" stroke-width="2.5"/></g>
<g transform="translate(609 337) rotate(144)" stroke="#3b2814" stroke-width="1.2"><rect x="47" y="-24" width="22" height="7.5" rx="3.7" fill="#7b5a3a"/><rect x="47" y="16.5" width="22" height="7.5" rx="3.7" fill="#7b5a3a"/><rect x="47" y="-15" width="21" height="30" rx="6" fill="#efb679"/><rect x="70" y="-16" width="16" height="32" rx="5" fill="#5c3d20"/><rect x="70" y="-15.5" width="13" height="31" rx="4.5" fill="#efb679" stroke="none"/><path d="M67.5 -2V2" stroke="#3b2814" stroke-width="2.5"/></g>
<g transform="translate(609 337) rotate(72)" stroke="#3b2814" stroke-width="1.2"><rect x="47" y="-24" width="22" height="7.5" rx="3.7" fill="#7b5a3a"/><rect x="47" y="16.5" width="22" height="7.5" rx="3.7" fill="#7b5a3a"/><rect x="47" y="-15" width="21" height="30" rx="6" fill="#efb679"/><rect x="70" y="-16" width="16" height="32" rx="5" fill="#5c3d20"/><rect x="70" y="-15.5" width="13" height="31" rx="4.5" fill="#efb679" stroke="none"/><path d="M67.5 -2V2" stroke="#3b2814" stroke-width="2.5"/></g>
<circle cx="609" cy="337" r="50.5" fill="#fdc65a" stroke="#3a2a10" stroke-width="1.3"/>
<rect x="604.3" y="313.8" width="10.7" height="46.7" rx="1.5" fill="#fff" stroke="#333" stroke-width="1"/>
<rect x="606.5" y="318" width="2.5" height="2.5" fill="#222"/><rect x="610.5" y="319" width="2.5" height="2.5" fill="#222"/>
<rect x="606.5" y="324" width="2.5" height="2.5" fill="#222"/><rect x="610.5" y="325" width="2.5" height="2.5" fill="#222"/>
<rect x="606.5" y="330" width="2.5" height="2.5" fill="#222"/><rect x="610.5" y="331" width="2.5" height="2.5" fill="#222"/>
<rect x="606.5" y="342" width="2.5" height="2.5" fill="#222"/><rect x="610.5" y="343" width="2.5" height="2.5" fill="#222"/>
<rect x="606.5" y="348" width="2.5" height="2.5" fill="#222"/><rect x="610.5" y="349" width="2.5" height="2.5" fill="#222"/>
<rect x="606.5" y="354" width="2.5" height="2.5" fill="#222"/><rect x="610.5" y="355" width="2.5" height="2.5" fill="#222"/>
<rect x="606" y="334" width="7" height="5" fill="#666" stroke="#222" stroke-width="0.8"/>
<rect x="699.4" y="228.3" width="35.4" height="63" fill="#f9c452" stroke="#2f2410" stroke-width="1.2"/>
<path d="M731.7 228.3V291.3" stroke="#2f2410" stroke-width="1"/>
<rect x="700" y="229" width="15.6" height="26" fill="#eef2f8" stroke="#222" stroke-width="1"/>
<rect x="703" y="241" width="8" height="12" rx="1" fill="#c8d0c8" stroke="#222" stroke-width="1.2"/><path d="M703 247H711" stroke="#222"/>
<path d="M715.6 240 A7.5 7.5 0 0 1 715.6 255 Z" fill="#eef2f8" stroke="#222" stroke-width="1"/>
<rect x="715.6" y="231" width="5" height="9" fill="#fff" stroke="#333" stroke-width="0.8"/>
<rect x="721.5" y="234" width="8.5" height="18" fill="#2a2a34"/><path d="M721.5 240H730M721.5 246H730M725.7 234V252" stroke="#777" stroke-width="0.7"/>
<path d="M735 256L737 258M735 262L737 264" stroke="#999" stroke-width="0.6"/>
<path d="M817.1 297.4 H999.6 V356 Q999.6 361.6 994 361.6 H823 Q817.1 361.6 817.1 356 Z" fill="#d6a676" stroke="#3a2a18" stroke-width="1.2"/>
<path d="M829.7 297.4 H987.8 V333 Q987.8 338.1 983 338.1 H834.5 Q829.7 338.1 829.7 333 Z" fill="#a77a50" stroke="#3a2a18" stroke-width="1.1"/>
<path d="M842 338V361M975 338V361M817 327H829.7M987.8 327H999.6" stroke="#c79a6c" stroke-width="0.8"/>
<rect x="890.6" y="302" width="36" height="11.4" fill="#8a8a8a" stroke="#2a2a2a" stroke-width="1"/>
<path d="M892 305H925M892 308H925M892 311H925" stroke="#c0c0c0" stroke-width="0.8"/>
<path d="M888.4 325 H929 L925 332.5 H892.4 Z" fill="#1a1a1a"/>
<rect x="903" y="332.5" width="12" height="3" fill="#c8c8c8" stroke="#555" stroke-width="0.6"/>
<rect x="836" y="310.5" width="15" height="14" rx="1" fill="#c8c8c8" stroke="#333" stroke-width="1"/><rect x="831.6" y="313" width="6" height="9" fill="#fff" stroke="#222" stroke-width="1"/><rect x="839" y="325" width="10" height="3" fill="#ddd" stroke="#555" stroke-width="0.6"/><rect x="842" y="313" width="4" height="7" fill="#777"/>
<rect x="960.5" y="312" width="14.5" height="12" rx="1" fill="#d8d8d8" stroke="#333" stroke-width="1"/><rect x="961" y="324" width="14" height="4" fill="#eee" stroke="#555" stroke-width="0.6"/><path d="M963 315V321M966 315H972M966 318H972M966 321H972" stroke="#222" stroke-width="1.2"/>
<circle cx="988" cy="246.2" r="11.5" fill="#707070" stroke="#555" stroke-width="1.2"/><circle cx="988" cy="246.5" r="9" fill="#4a4a4a"/>
<g transform="translate(908 270) rotate(-10)" stroke="#3b2814" stroke-width="1.2"><rect x="-22" y="-5" width="7" height="23" rx="3" fill="#7b5a3a"/><rect x="15" y="-9" width="7" height="23" rx="3" fill="#7b5a3a" transform="rotate(-20 18 2)"/><path d="M-15 -9 Q0 -12 15 -9 L17 14 Q15 23 0 23 Q-15 23 -16 14 Z" fill="#efb679"/><rect x="-16" y="-28" width="31" height="18" rx="6" fill="#efb679"/><path d="M-14 -26 Q0 -31 13 -27" fill="none" stroke="#5c3d20" stroke-width="3"/></g>
<path d="M852 292 L851 288 H856 L855 292 Z M864 292 L863 288 H868 L867 292 Z" fill="#111"/>
<path d="M841 279 Q840 269 852 267.5 H868 Q880 269 880 279 Q880 287 874 289 Q860 291 846 289 Q840 287 841 279 Z" fill="#8a9cf0" stroke="#14184a" stroke-width="1.1"/>
<path d="M845.5 275 L849.5 289 M874.5 275 L870.5 289" stroke="#14184a" stroke-width="1"/>
<path d="M852.5 272 Q859.5 284 866.5 272 Q866 281 859.5 281.5 Q853 281 852.5 272 Z" fill="#fff" stroke="#14184a" stroke-width="0.9"/>
<path d="M858.5 281.5 L857.5 289.5 H861.5 L860.5 281.5 Z" fill="#14184a"/>
<circle cx="859.5" cy="269.3" r="8.2" fill="#2e2e34" stroke="#111" stroke-width="0.8"/>
<circle cx="818.2" cy="345" r="5.3" fill="#7cc13e" stroke="#2e5a10" stroke-width="1"/>
<circle cx="827" cy="336.8" r="4.3" fill="#7cc13e" stroke="#2e5a10" stroke-width="1"/>
<circle cx="838" cy="342" r="4.2" fill="#7cc13e" stroke="#2e5a10" stroke-width="1"/>
<circle cx="836.5" cy="353" r="4.2" fill="#7cc13e" stroke="#2e5a10" stroke-width="1"/>
<circle cx="828.5" cy="360.5" r="4.3" fill="#7cc13e" stroke="#2e5a10" stroke-width="1"/>
<circle cx="819.5" cy="355" r="3.6" fill="#7cc13e" stroke="#2e5a10" stroke-width="1"/>
<circle cx="828.75" cy="347.5" r="8.6" fill="#6db532" stroke="#2e5a10" stroke-width="1.1"/>
<rect x="676.6" y="518.2" width="17" height="51.5" rx="1.5" fill="#6f5038" stroke="#2e1c10" stroke-width="1.2"/>
<rect x="828.6" y="517.2" width="17" height="52.5" rx="1.5" fill="#6f5038" stroke="#2e1c10" stroke-width="1.2"/>
<rect x="693.3" y="518.2" width="135.3" height="46" fill="#6f5038" stroke="#2e1c10" stroke-width="1.2"/>
<path d="M738.5 518.2V561M783.5 518.2V561" stroke="#2e1c10" stroke-width="1.1"/>
<path d="M693.3 518.2V562M828.6 518.2V562" stroke="#2e1c10" stroke-width="2.5"/>
<rect x="693.3" y="560" width="135.3" height="6" fill="#2e1c10"/>
<rect x="683.1" y="565.3" width="154.6" height="13.1" fill="#6f5038" stroke="#2e1c10" stroke-width="1.2"/>
<g stroke="#111" stroke-width="0.9"><path d="M709.5 499 L714 498 L726 525 L720.5 528 Z" fill="#dcc48f"/><path d="M726 499 L730 501 L712 528.5 L706.5 525.5 Z" fill="#dcc48f"/><path d="M710 497 L714.5 496 L715.5 500 L711 501 Z M726 498 L730.5 500 L729 503 L725 502 Z" fill="#fff"/><ellipse cx="712" cy="492.5" rx="2.8" ry="5" fill="#111" transform="rotate(-10 712 492.5)"/><ellipse cx="729.3" cy="494" rx="2.8" ry="5" fill="#111" transform="rotate(35 729.3 494)"/><path d="M704 534 L707 522 H722 L727 534 Z" fill="#fff"/><rect x="708" y="524.5" width="12.4" height="9" fill="#d8d8d8"/><path d="M700.5 547 Q700 536 710 535.8 H724 Q733 536 732.8 547 Q732 557 722 557.5 H711 Q701 557 700.5 547 Z" fill="#ee80a0"/><path d="M707 540 Q709 550 712 552 M726 540 Q724 550 721 552" fill="none" stroke="#7a2040" stroke-width="0.8"/></g>
<path d="M710 550 Q716 546 723 550 L722 553 H711 Z" fill="#fff" stroke="#111" stroke-width="0.7"/>
<circle cx="716.3" cy="559" r="8" fill="#8a8a8a" stroke="#333" stroke-width="1"/>
<g><ellipse cx="567.6" cy="520.8" rx="5.7" ry="3.2" transform="rotate(121 567.6 520.8)" fill="#8ccc4e"/><ellipse cx="560.8" cy="494.2" rx="5.7" ry="3.1" transform="rotate(120 560.8 494.2)" fill="#3a8a22"/><ellipse cx="565.2" cy="513.5" rx="4.4" ry="2.4" transform="rotate(140 565.2 513.5)" fill="#4a9e2a"/><ellipse cx="543.1" cy="502.9" rx="3.7" ry="2.0" transform="rotate(38 543.1 502.9)" fill="#5cb236"/><ellipse cx="580.2" cy="484.0" rx="3.0" ry="1.7" transform="rotate(16 580.2 484.0)" fill="#4a9e2a"/><ellipse cx="581.3" cy="523.4" rx="3.9" ry="2.1" transform="rotate(7 581.3 523.4)" fill="#3a8a22"/><ellipse cx="572.7" cy="486.0" rx="5.2" ry="2.8" transform="rotate(99 572.7 486.0)" fill="#74c040"/><ellipse cx="559.8" cy="472.4" rx="5.2" ry="2.9" transform="rotate(147 559.8 472.4)" fill="#2a6e1a"/><ellipse cx="539.6" cy="509.1" rx="3.3" ry="1.8" transform="rotate(34 539.6 509.1)" fill="#8ccc4e"/><ellipse cx="551.3" cy="500.0" rx="4.3" ry="2.4" transform="rotate(160 551.3 500.0)" fill="#4a9e2a"/><ellipse cx="577.6" cy="484.6" rx="4.2" ry="2.3" transform="rotate(89 577.6 484.6)" fill="#a6d65c"/><ellipse cx="547.9" cy="495.6" rx="5.7" ry="3.1" transform="rotate(174 547.9 495.6)" fill="#5cb236"/><ellipse cx="570.2" cy="497.0" rx="6.0" ry="3.3" transform="rotate(171 570.2 497.0)" fill="#8ccc4e"/><ellipse cx="557.9" cy="476.7" rx="5.9" ry="3.2" transform="rotate(146 557.9 476.7)" fill="#8ccc4e"/><ellipse cx="543.8" cy="489.2" rx="4.9" ry="2.7" transform="rotate(146 543.8 489.2)" fill="#5cb236"/><ellipse cx="564.9" cy="509.7" rx="5.6" ry="3.1" transform="rotate(123 564.9 509.7)" fill="#2a6e1a"/><ellipse cx="588.0" cy="513.2" rx="5.7" ry="3.1" transform="rotate(5 588.0 513.2)" fill="#2a6e1a"/><ellipse cx="559.1" cy="524.0" rx="3.4" ry="1.8" transform="rotate(154 559.1 524.0)" fill="#a6d65c"/><ellipse cx="561.4" cy="495.4" rx="4.8" ry="2.6" transform="rotate(141 561.4 495.4)" fill="#4a9e2a"/><ellipse cx="587.0" cy="480.0" rx="3.7" ry="2.0" transform="rotate(9 587.0 480.0)" fill="#74c040"/><ellipse cx="563.1" cy="507.0" rx="4.6" ry="2.5" transform="rotate(50 563.1 507.0)" fill="#74c040"/><ellipse cx="581.4" cy="496.7" rx="3.5" ry="1.9" transform="rotate(10 581.4 496.7)" fill="#8ccc4e"/><ellipse cx="582.8" cy="497.4" rx="5.9" ry="3.2" transform="rotate(96 582.8 497.4)" fill="#8ccc4e"/><ellipse cx="546.7" cy="518.4" rx="4.9" ry="2.7" transform="rotate(152 546.7 518.4)" fill="#2a6e1a"/><ellipse cx="562.1" cy="491.1" rx="4.5" ry="2.5" transform="rotate(110 562.1 491.1)" fill="#a6d65c"/><ellipse cx="549.7" cy="481.2" rx="4.3" ry="2.4" transform="rotate(66 549.7 481.2)" fill="#8ccc4e"/><ellipse cx="544.7" cy="496.7" rx="5.4" ry="3.0" transform="rotate(148 544.7 496.7)" fill="#3a8a22"/><ellipse cx="558.9" cy="515.8" rx="4.9" ry="2.7" transform="rotate(15 558.9 515.8)" fill="#74c040"/><ellipse cx="554.8" cy="487.1" rx="5.0" ry="2.8" transform="rotate(90 554.8 487.1)" fill="#8ccc4e"/><ellipse cx="554.1" cy="489.8" rx="3.1" ry="1.7" transform="rotate(15 554.1 489.8)" fill="#2a6e1a"/><ellipse cx="570.1" cy="498.3" rx="3.8" ry="2.1" transform="rotate(116 570.1 498.3)" fill="#8ccc4e"/><ellipse cx="559.2" cy="520.9" rx="4.1" ry="2.3" transform="rotate(80 559.2 520.9)" fill="#5cb236"/><ellipse cx="567.4" cy="472.9" rx="3.9" ry="2.1" transform="rotate(96 567.4 472.9)" fill="#8ccc4e"/><ellipse cx="586.7" cy="515.5" rx="5.1" ry="2.8" transform="rotate(33 586.7 515.5)" fill="#74c040"/><ellipse cx="561.0" cy="512.2" rx="3.8" ry="2.1" transform="rotate(83 561.0 512.2)" fill="#a6d65c"/><ellipse cx="573.3" cy="517.2" rx="3.3" ry="1.8" transform="rotate(153 573.3 517.2)" fill="#4a9e2a"/><ellipse cx="558.7" cy="514.6" rx="3.7" ry="2.0" transform="rotate(43 558.7 514.6)" fill="#a6d65c"/><ellipse cx="587.9" cy="511.5" rx="5.7" ry="3.1" transform="rotate(115 587.9 511.5)" fill="#5cb236"/><ellipse cx="562.7" cy="525.0" rx="4.6" ry="2.5" transform="rotate(48 562.7 525.0)" fill="#3a8a22"/><ellipse cx="555.4" cy="523.8" rx="3.6" ry="2.0" transform="rotate(71 555.4 523.8)" fill="#74c040"/><ellipse cx="551.8" cy="521.8" rx="5.4" ry="3.0" transform="rotate(88 551.8 521.8)" fill="#3a8a22"/><ellipse cx="550.1" cy="489.5" rx="5.4" ry="3.0" transform="rotate(69 550.1 489.5)" fill="#74c040"/><ellipse cx="543.5" cy="504.6" rx="4.3" ry="2.3" transform="rotate(104 543.5 504.6)" fill="#8ccc4e"/><ellipse cx="584.2" cy="503.6" rx="3.0" ry="1.7" transform="rotate(159 584.2 503.6)" fill="#5cb236"/><ellipse cx="585.0" cy="497.9" rx="3.7" ry="2.0" transform="rotate(116 585.0 497.9)" fill="#4a9e2a"/><ellipse cx="578.2" cy="479.3" rx="5.9" ry="3.2" transform="rotate(139 578.2 479.3)" fill="#74c040"/><ellipse cx="558.5" cy="511.1" rx="5.6" ry="3.1" transform="rotate(73 558.5 511.1)" fill="#3a8a22"/><ellipse cx="576.5" cy="509.3" rx="5.7" ry="3.1" transform="rotate(177 576.5 509.3)" fill="#3a8a22"/><ellipse cx="553.1" cy="498.5" rx="4.7" ry="2.6" transform="rotate(3 553.1 498.5)" fill="#2a6e1a"/><ellipse cx="556.0" cy="500.7" rx="3.9" ry="2.1" transform="rotate(169 556.0 500.7)" fill="#74c040"/><ellipse cx="587.1" cy="502.1" rx="5.8" ry="3.2" transform="rotate(156 587.1 502.1)" fill="#3a8a22"/><ellipse cx="573.8" cy="506.2" rx="4.6" ry="2.5" transform="rotate(15 573.8 506.2)" fill="#a6d65c"/><ellipse cx="558.3" cy="509.8" rx="5.7" ry="3.1" transform="rotate(30 558.3 509.8)" fill="#74c040"/><ellipse cx="578.2" cy="522.2" rx="3.4" ry="1.9" transform="rotate(1 578.2 522.2)" fill="#a6d65c"/><ellipse cx="544.2" cy="501.2" rx="3.1" ry="1.7" transform="rotate(69 544.2 501.2)" fill="#2a6e1a"/><ellipse cx="566.2" cy="522.3" rx="4.3" ry="2.3" transform="rotate(121 566.2 522.3)" fill="#74c040"/><ellipse cx="554.4" cy="523.0" rx="3.2" ry="1.7" transform="rotate(32 554.4 523.0)" fill="#a6d65c"/><ellipse cx="572.2" cy="501.4" rx="5.9" ry="3.3" transform="rotate(22 572.2 501.4)" fill="#2a6e1a"/><ellipse cx="545.8" cy="497.5" rx="3.9" ry="2.2" transform="rotate(89 545.8 497.5)" fill="#5cb236"/><ellipse cx="552.4" cy="511.4" rx="4.1" ry="2.2" transform="rotate(48 552.4 511.4)" fill="#8ccc4e"/><ellipse cx="584.9" cy="498.1" rx="4.7" ry="2.6" transform="rotate(97 584.9 498.1)" fill="#5cb236"/><ellipse cx="572.1" cy="478.5" rx="4.1" ry="2.3" transform="rotate(154 572.1 478.5)" fill="#3a8a22"/><ellipse cx="553.5" cy="482.2" rx="5.4" ry="3.0" transform="rotate(159 553.5 482.2)" fill="#4a9e2a"/><ellipse cx="571.1" cy="495.1" rx="4.5" ry="2.5" transform="rotate(179 571.1 495.1)" fill="#4a9e2a"/><ellipse cx="554.8" cy="525.4" rx="4.4" ry="2.4" transform="rotate(62 554.8 525.4)" fill="#2a6e1a"/><ellipse cx="568.9" cy="514.3" rx="3.2" ry="1.8" transform="rotate(108 568.9 514.3)" fill="#74c040"/><ellipse cx="567.7" cy="509.8" rx="5.8" ry="3.2" transform="rotate(95 567.7 509.8)" fill="#3a8a22"/><ellipse cx="587.3" cy="495.3" rx="3.8" ry="2.1" transform="rotate(118 587.3 495.3)" fill="#a6d65c"/><ellipse cx="555.7" cy="473.3" rx="5.0" ry="2.7" transform="rotate(135 555.7 473.3)" fill="#4a9e2a"/><ellipse cx="572.2" cy="476.6" rx="4.0" ry="2.2" transform="rotate(136 572.2 476.6)" fill="#4a9e2a"/><ellipse cx="583.7" cy="512.9" rx="4.4" ry="2.4" transform="rotate(60 583.7 512.9)" fill="#3a8a22"/><ellipse cx="566.9" cy="493.5" rx="4.7" ry="2.6" transform="rotate(168 566.9 493.5)" fill="#3a8a22"/><ellipse cx="575.0" cy="491.1" rx="4.0" ry="2.2" transform="rotate(31 575.0 491.1)" fill="#3a8a22"/><ellipse cx="575.7" cy="501.1" rx="5.5" ry="3.0" transform="rotate(72 575.7 501.1)" fill="#2a6e1a"/><ellipse cx="543.2" cy="487.1" rx="6.0" ry="3.3" transform="rotate(144 543.2 487.1)" fill="#3a8a22"/><ellipse cx="541.5" cy="497.8" rx="4.7" ry="2.6" transform="rotate(25 541.5 497.8)" fill="#3a8a22"/><ellipse cx="572.6" cy="496.6" rx="5.6" ry="3.1" transform="rotate(46 572.6 496.6)" fill="#8ccc4e"/><ellipse cx="572.7" cy="486.9" rx="4.9" ry="2.7" transform="rotate(116 572.7 486.9)" fill="#5cb236"/><ellipse cx="547.2" cy="482.7" rx="3.8" ry="2.1" transform="rotate(153 547.2 482.7)" fill="#2a6e1a"/><ellipse cx="552.3" cy="509.9" rx="5.9" ry="3.2" transform="rotate(96 552.3 509.9)" fill="#2a6e1a"/><ellipse cx="537.4" cy="499.4" rx="5.5" ry="3.0" transform="rotate(41 537.4 499.4)" fill="#2a6e1a"/><ellipse cx="547.2" cy="510.6" rx="5.0" ry="2.8" transform="rotate(132 547.2 510.6)" fill="#74c040"/><ellipse cx="561.5" cy="489.0" rx="5.7" ry="3.1" transform="rotate(38 561.5 489.0)" fill="#2a6e1a"/><ellipse cx="576.7" cy="517.0" rx="5.7" ry="3.2" transform="rotate(132 576.7 517.0)" fill="#2a6e1a"/><ellipse cx="587.2" cy="492.7" rx="3.6" ry="2.0" transform="rotate(68 587.2 492.7)" fill="#a6d65c"/><ellipse cx="566.1" cy="488.4" rx="3.9" ry="2.2" transform="rotate(59 566.1 488.4)" fill="#74c040"/><ellipse cx="578.7" cy="482.4" rx="3.9" ry="2.1" transform="rotate(180 578.7 482.4)" fill="#a6d65c"/><ellipse cx="579.7" cy="481.8" rx="4.8" ry="2.6" transform="rotate(68 579.7 481.8)" fill="#74c040"/><ellipse cx="578.3" cy="489.2" rx="4.4" ry="2.4" transform="rotate(97 578.3 489.2)" fill="#8ccc4e"/><ellipse cx="572.7" cy="520.3" rx="4.0" ry="2.2" transform="rotate(36 572.7 520.3)" fill="#5cb236"/><ellipse cx="544.9" cy="511.4" rx="4.8" ry="2.6" transform="rotate(119 544.9 511.4)" fill="#4a9e2a"/><ellipse cx="541.9" cy="486.2" rx="4.7" ry="2.6" transform="rotate(123 541.9 486.2)" fill="#4a9e2a"/><ellipse cx="573.8" cy="499.1" rx="5.3" ry="2.9" transform="rotate(11 573.8 499.1)" fill="#2a6e1a"/><ellipse cx="552.4" cy="502.3" rx="4.9" ry="2.7" transform="rotate(172 552.4 502.3)" fill="#5cb236"/><ellipse cx="578.3" cy="505.2" rx="3.7" ry="2.0" transform="rotate(48 578.3 505.2)" fill="#8ccc4e"/><ellipse cx="567.7" cy="488.9" rx="5.1" ry="2.8" transform="rotate(9 567.7 488.9)" fill="#74c040"/><ellipse cx="577.8" cy="490.9" rx="3.1" ry="1.7" transform="rotate(46 577.8 490.9)" fill="#a6d65c"/><ellipse cx="544.1" cy="511.0" rx="3.4" ry="1.8" transform="rotate(67 544.1 511.0)" fill="#3a8a22"/><ellipse cx="573.9" cy="486.0" rx="4.4" ry="2.4" transform="rotate(172 573.9 486.0)" fill="#8ccc4e"/><ellipse cx="563.4" cy="503.8" rx="4.3" ry="2.4" transform="rotate(124 563.4 503.8)" fill="#8ccc4e"/><ellipse cx="586.5" cy="510.5" rx="5.9" ry="3.2" transform="rotate(100 586.5 510.5)" fill="#4a9e2a"/><ellipse cx="577.5" cy="511.1" rx="3.2" ry="1.8" transform="rotate(110 577.5 511.1)" fill="#8ccc4e"/><ellipse cx="586.8" cy="517.2" rx="3.3" ry="1.8" transform="rotate(179 586.8 517.2)" fill="#8ccc4e"/><ellipse cx="548.1" cy="517.6" rx="4.4" ry="2.4" transform="rotate(169 548.1 517.6)" fill="#a6d65c"/><ellipse cx="555.5" cy="478.5" rx="5.5" ry="3.0" transform="rotate(27 555.5 478.5)" fill="#a6d65c"/><ellipse cx="566.7" cy="471.1" rx="4.7" ry="2.6" transform="rotate(134 566.7 471.1)" fill="#4a9e2a"/><ellipse cx="581.4" cy="512.8" rx="3.2" ry="1.7" transform="rotate(75 581.4 512.8)" fill="#8ccc4e"/><ellipse cx="556.5" cy="479.8" rx="4.9" ry="2.7" transform="rotate(161 556.5 479.8)" fill="#5cb236"/><ellipse cx="576.4" cy="513.8" rx="4.4" ry="2.4" transform="rotate(27 576.4 513.8)" fill="#4a9e2a"/><ellipse cx="575.9" cy="495.0" rx="4.9" ry="2.7" transform="rotate(166 575.9 495.0)" fill="#8ccc4e"/><ellipse cx="548.3" cy="487.1" rx="3.6" ry="2.0" transform="rotate(123 548.3 487.1)" fill="#4a9e2a"/><ellipse cx="561.3" cy="510.8" rx="3.3" ry="1.8" transform="rotate(46 561.3 510.8)" fill="#3a8a22"/><ellipse cx="566.6" cy="478.1" rx="4.2" ry="2.3" transform="rotate(25 566.6 478.1)" fill="#4a9e2a"/><ellipse cx="564.2" cy="517.4" rx="3.4" ry="1.9" transform="rotate(122 564.2 517.4)" fill="#a6d65c"/><ellipse cx="551.6" cy="499.1" rx="4.5" ry="2.5" transform="rotate(85 551.6 499.1)" fill="#a6d65c"/><ellipse cx="584.3" cy="492.9" rx="5.3" ry="2.9" transform="rotate(90 584.3 492.9)" fill="#a6d65c"/><ellipse cx="537.1" cy="499.9" rx="3.8" ry="2.1" transform="rotate(25 537.1 499.9)" fill="#5cb236"/><ellipse cx="556.9" cy="479.7" rx="3.3" ry="1.8" transform="rotate(178 556.9 479.7)" fill="#4a9e2a"/><ellipse cx="573.0" cy="516.9" rx="4.2" ry="2.3" transform="rotate(32 573.0 516.9)" fill="#4a9e2a"/><ellipse cx="556.7" cy="493.4" rx="5.4" ry="3.0" transform="rotate(139 556.7 493.4)" fill="#2a6e1a"/><ellipse cx="544.5" cy="495.7" rx="5.6" ry="3.1" transform="rotate(94 544.5 495.7)" fill="#5cb236"/><ellipse cx="567.0" cy="494.6" rx="4.3" ry="2.4" transform="rotate(104 567.0 494.6)" fill="#a6d65c"/><ellipse cx="583.0" cy="493.9" rx="5.7" ry="3.1" transform="rotate(79 583.0 493.9)" fill="#74c040"/><ellipse cx="546.9" cy="478.2" rx="5.1" ry="2.8" transform="rotate(170 546.9 478.2)" fill="#4a9e2a"/><ellipse cx="543.6" cy="501.7" rx="4.9" ry="2.7" transform="rotate(27 543.6 501.7)" fill="#4a9e2a"/><ellipse cx="569.0" cy="476.1" rx="3.5" ry="1.9" transform="rotate(160 569.0 476.1)" fill="#2a6e1a"/><ellipse cx="553.6" cy="502.6" rx="3.6" ry="2.0" transform="rotate(128 553.6 502.6)" fill="#74c040"/><ellipse cx="591.2" cy="486.9" rx="4.7" ry="2.6" transform="rotate(168 591.2 486.9)" fill="#3a8a22"/><ellipse cx="574.3" cy="492.8" rx="3.3" ry="1.8" transform="rotate(12 574.3 492.8)" fill="#a6d65c"/><ellipse cx="588.5" cy="503.1" rx="3.2" ry="1.8" transform="rotate(137 588.5 503.1)" fill="#74c040"/><ellipse cx="582.8" cy="501.5" rx="5.6" ry="3.1" transform="rotate(177 582.8 501.5)" fill="#8ccc4e"/><ellipse cx="563.1" cy="491.8" rx="4.8" ry="2.6" transform="rotate(8 563.1 491.8)" fill="#a6d65c"/><ellipse cx="560.7" cy="475.1" rx="6.0" ry="3.3" transform="rotate(52 560.7 475.1)" fill="#8ccc4e"/><ellipse cx="590.5" cy="488.3" rx="5.1" ry="2.8" transform="rotate(56 590.5 488.3)" fill="#2a6e1a"/><ellipse cx="556.5" cy="500.4" rx="4.2" ry="2.3" transform="rotate(51 556.5 500.4)" fill="#3a8a22"/><ellipse cx="561.0" cy="482.0" rx="5.1" ry="2.8" transform="rotate(137 561.0 482.0)" fill="#2a6e1a"/><ellipse cx="573.9" cy="488.9" rx="3.9" ry="2.2" transform="rotate(118 573.9 488.9)" fill="#2a6e1a"/><ellipse cx="542.7" cy="505.9" rx="3.5" ry="1.9" transform="rotate(9 542.7 505.9)" fill="#2a6e1a"/><ellipse cx="562.7" cy="482.3" rx="4.3" ry="2.4" transform="rotate(92 562.7 482.3)" fill="#8ccc4e"/><ellipse cx="554.7" cy="491.7" rx="5.4" ry="3.0" transform="rotate(66 554.7 491.7)" fill="#3a8a22"/><ellipse cx="568.3" cy="488.8" rx="4.6" ry="2.5" transform="rotate(40 568.3 488.8)" fill="#2a6e1a"/><ellipse cx="569.0" cy="511.1" rx="4.5" ry="2.5" transform="rotate(162 569.0 511.1)" fill="#2a6e1a"/><ellipse cx="575.5" cy="501.2" rx="4.3" ry="2.4" transform="rotate(47 575.5 501.2)" fill="#5cb236"/><ellipse cx="570.0" cy="501.1" rx="4.0" ry="2.2" transform="rotate(8 570.0 501.1)" fill="#2a6e1a"/><ellipse cx="564.1" cy="493.2" rx="3.1" ry="1.7" transform="rotate(126 564.1 493.2)" fill="#2a6e1a"/><ellipse cx="594.1" cy="504.3" rx="3.7" ry="2.0" transform="rotate(99 594.1 504.3)" fill="#5cb236"/><ellipse cx="554.4" cy="501.4" rx="3.3" ry="1.8" transform="rotate(31 554.4 501.4)" fill="#74c040"/><ellipse cx="544.4" cy="484.9" rx="3.8" ry="2.1" transform="rotate(119 544.4 484.9)" fill="#8ccc4e"/><ellipse cx="572.9" cy="471.9" rx="3.7" ry="2.1" transform="rotate(68 572.9 471.9)" fill="#2a6e1a"/><ellipse cx="582.5" cy="502.7" rx="4.0" ry="2.2" transform="rotate(14 582.5 502.7)" fill="#8ccc4e"/><ellipse cx="554.2" cy="473.5" rx="4.9" ry="2.7" transform="rotate(26 554.2 473.5)" fill="#74c040"/><ellipse cx="574.6" cy="501.2" rx="4.5" ry="2.5" transform="rotate(123 574.6 501.2)" fill="#5cb236"/><ellipse cx="588.1" cy="507.3" rx="3.6" ry="2.0" transform="rotate(122 588.1 507.3)" fill="#8ccc4e"/><ellipse cx="555.3" cy="516.4" rx="5.8" ry="3.2" transform="rotate(8 555.3 516.4)" fill="#8ccc4e"/><ellipse cx="547.4" cy="516.4" rx="5.8" ry="3.2" transform="rotate(22 547.4 516.4)" fill="#4a9e2a"/><ellipse cx="577.8" cy="495.5" rx="3.3" ry="1.8" transform="rotate(99 577.8 495.5)" fill="#2a6e1a"/><ellipse cx="545.7" cy="493.3" rx="5.8" ry="3.2" transform="rotate(44 545.7 493.3)" fill="#a6d65c"/><ellipse cx="580.1" cy="476.5" rx="5.5" ry="3.0" transform="rotate(141 580.1 476.5)" fill="#2a6e1a"/><ellipse cx="558.1" cy="509.1" rx="4.2" ry="2.3" transform="rotate(58 558.1 509.1)" fill="#a6d65c"/><ellipse cx="543.2" cy="507.8" rx="3.8" ry="2.1" transform="rotate(43 543.2 507.8)" fill="#8ccc4e"/><ellipse cx="540.9" cy="498.4" rx="5.1" ry="2.8" transform="rotate(124 540.9 498.4)" fill="#4a9e2a"/><ellipse cx="577.6" cy="502.7" rx="3.1" ry="1.7" transform="rotate(119 577.6 502.7)" fill="#a6d65c"/><ellipse cx="586.2" cy="512.7" rx="3.3" ry="1.8" transform="rotate(60 586.2 512.7)" fill="#4a9e2a"/><ellipse cx="545.1" cy="484.2" rx="5.6" ry="3.1" transform="rotate(12 545.1 484.2)" fill="#3a8a22"/><ellipse cx="539.9" cy="508.0" rx="4.9" ry="2.7" transform="rotate(94 539.9 508.0)" fill="#4a9e2a"/><ellipse cx="578.8" cy="499.6" rx="5.9" ry="3.2" transform="rotate(26 578.8 499.6)" fill="#a6d65c"/><ellipse cx="557.5" cy="513.2" rx="3.2" ry="1.8" transform="rotate(166 557.5 513.2)" fill="#2a6e1a"/><ellipse cx="571.9" cy="522.8" rx="5.8" ry="3.2" transform="rotate(36 571.9 522.8)" fill="#5cb236"/><ellipse cx="563.3" cy="497.9" rx="3.9" ry="2.1" transform="rotate(53 563.3 497.9)" fill="#5cb236"/><ellipse cx="570.1" cy="520.9" rx="4.5" ry="2.5" transform="rotate(154 570.1 520.9)" fill="#2a6e1a"/><ellipse cx="554.6" cy="524.2" rx="3.6" ry="2.0" transform="rotate(45 554.6 524.2)" fill="#a6d65c"/><ellipse cx="561.8" cy="495.4" rx="3.3" ry="1.8" transform="rotate(6 561.8 495.4)" fill="#a6d65c"/><ellipse cx="571.8" cy="492.3" rx="3.3" ry="1.8" transform="rotate(119 571.8 492.3)" fill="#8ccc4e"/><ellipse cx="544.8" cy="515.1" rx="4.8" ry="2.7" transform="rotate(164 544.8 515.1)" fill="#4a9e2a"/><ellipse cx="542.4" cy="501.6" rx="4.0" ry="2.2" transform="rotate(154 542.4 501.6)" fill="#4a9e2a"/><ellipse cx="552.4" cy="477.8" rx="5.5" ry="3.0" transform="rotate(152 552.4 477.8)" fill="#8ccc4e"/><ellipse cx="549.2" cy="505.7" rx="4.6" ry="2.5" transform="rotate(118 549.2 505.7)" fill="#3a8a22"/><ellipse cx="558.9" cy="521.6" rx="4.0" ry="2.2" transform="rotate(124 558.9 521.6)" fill="#8ccc4e"/><ellipse cx="566.6" cy="471.6" rx="5.2" ry="2.9" transform="rotate(108 566.6 471.6)" fill="#4a9e2a"/><ellipse cx="567.6" cy="492.2" rx="3.6" ry="2.0" transform="rotate(89 567.6 492.2)" fill="#74c040"/><ellipse cx="569.8" cy="493.3" rx="4.3" ry="2.4" transform="rotate(21 569.8 493.3)" fill="#5cb236"/><ellipse cx="565.9" cy="516.0" rx="5.8" ry="3.2" transform="rotate(55 565.9 516.0)" fill="#4a9e2a"/><ellipse cx="586.3" cy="479.1" rx="4.4" ry="2.4" transform="rotate(137 586.3 479.1)" fill="#74c040"/><ellipse cx="576.6" cy="485.4" rx="5.7" ry="3.1" transform="rotate(104 576.6 485.4)" fill="#5cb236"/><ellipse cx="540.6" cy="502.0" rx="4.4" ry="2.4" transform="rotate(150 540.6 502.0)" fill="#2a6e1a"/><ellipse cx="579.7" cy="492.0" rx="3.6" ry="2.0" transform="rotate(24 579.7 492.0)" fill="#3a8a22"/><ellipse cx="577.1" cy="501.5" rx="4.6" ry="2.5" transform="rotate(163 577.1 501.5)" fill="#74c040"/><ellipse cx="553.4" cy="501.7" rx="3.8" ry="2.1" transform="rotate(110 553.4 501.7)" fill="#5cb236"/><ellipse cx="585.3" cy="504.1" rx="5.2" ry="2.9" transform="rotate(73 585.3 504.1)" fill="#5cb236"/><ellipse cx="578.0" cy="514.6" rx="4.3" ry="2.4" transform="rotate(52 578.0 514.6)" fill="#2a6e1a"/><ellipse cx="580.5" cy="520.3" rx="3.9" ry="2.1" transform="rotate(96 580.5 520.3)" fill="#4a9e2a"/><ellipse cx="592.9" cy="496.0" rx="5.8" ry="3.2" transform="rotate(110 592.9 496.0)" fill="#8ccc4e"/><ellipse cx="558.5" cy="517.8" rx="6.0" ry="3.3" transform="rotate(56 558.5 517.8)" fill="#74c040"/><ellipse cx="549.0" cy="520.2" rx="3.1" ry="1.7" transform="rotate(95 549.0 520.2)" fill="#8ccc4e"/><ellipse cx="585.7" cy="482.5" rx="5.2" ry="2.9" transform="rotate(133 585.7 482.5)" fill="#8ccc4e"/><ellipse cx="576.5" cy="500.2" rx="3.4" ry="1.9" transform="rotate(5 576.5 500.2)" fill="#74c040"/><ellipse cx="569.3" cy="505.1" rx="6.0" ry="3.3" transform="rotate(119 569.3 505.1)" fill="#5cb236"/><ellipse cx="548.5" cy="522.0" rx="5.9" ry="3.3" transform="rotate(8 548.5 522.0)" fill="#8ccc4e"/><ellipse cx="551.9" cy="500.4" rx="4.3" ry="2.4" transform="rotate(86 551.9 500.4)" fill="#8ccc4e"/><ellipse cx="577.5" cy="480.1" rx="3.3" ry="1.8" transform="rotate(79 577.5 480.1)" fill="#a6d65c"/><ellipse cx="564.3" cy="523.2" rx="4.3" ry="2.3" transform="rotate(66 564.3 523.2)" fill="#2a6e1a"/><ellipse cx="563.4" cy="503.7" rx="4.9" ry="2.7" transform="rotate(172 563.4 503.7)" fill="#3a8a22"/><ellipse cx="578.8" cy="521.3" rx="3.7" ry="2.1" transform="rotate(34 578.8 521.3)" fill="#74c040"/><ellipse cx="564.9" cy="472.9" rx="4.5" ry="2.5" transform="rotate(86 564.9 472.9)" fill="#2a6e1a"/><ellipse cx="551.5" cy="494.6" rx="3.1" ry="1.7" transform="rotate(124 551.5 494.6)" fill="#5cb236"/><ellipse cx="548.9" cy="478.0" rx="4.4" ry="2.4" transform="rotate(170 548.9 478.0)" fill="#2a6e1a"/><ellipse cx="566.8" cy="472.6" rx="4.5" ry="2.5" transform="rotate(94 566.8 472.6)" fill="#74c040"/><ellipse cx="554.1" cy="498.1" rx="3.2" ry="1.8" transform="rotate(35 554.1 498.1)" fill="#5cb236"/><ellipse cx="587.4" cy="498.4" rx="5.3" ry="2.9" transform="rotate(113 587.4 498.4)" fill="#2a6e1a"/><ellipse cx="541.1" cy="506.8" rx="3.8" ry="2.1" transform="rotate(135 541.1 506.8)" fill="#2a6e1a"/><ellipse cx="575.1" cy="513.0" rx="3.1" ry="1.7" transform="rotate(124 575.1 513.0)" fill="#74c040"/><ellipse cx="581.6" cy="478.3" rx="4.8" ry="2.7" transform="rotate(7 581.6 478.3)" fill="#74c040"/><ellipse cx="556.9" cy="520.0" rx="4.5" ry="2.5" transform="rotate(71 556.9 520.0)" fill="#3a8a22"/><ellipse cx="571.6" cy="474.9" rx="3.3" ry="1.8" transform="rotate(171 571.6 474.9)" fill="#8ccc4e"/><ellipse cx="570.7" cy="501.9" rx="5.7" ry="3.1" transform="rotate(164 570.7 501.9)" fill="#2a6e1a"/><ellipse cx="550.7" cy="504.7" rx="3.5" ry="1.9" transform="rotate(98 550.7 504.7)" fill="#8ccc4e"/><ellipse cx="583.0" cy="492.9" rx="3.8" ry="2.1" transform="rotate(9 583.0 492.9)" fill="#3a8a22"/><ellipse cx="581.3" cy="493.9" rx="4.7" ry="2.6" transform="rotate(9 581.3 493.9)" fill="#2a6e1a"/><ellipse cx="575.8" cy="510.2" rx="4.5" ry="2.5" transform="rotate(51 575.8 510.2)" fill="#3a8a22"/><ellipse cx="564.1" cy="475.3" rx="5.2" ry="2.9" transform="rotate(31 564.1 475.3)" fill="#3a8a22"/><ellipse cx="548.2" cy="480.3" rx="5.8" ry="3.2" transform="rotate(177 548.2 480.3)" fill="#3a8a22"/><ellipse cx="579.6" cy="505.8" rx="4.4" ry="2.4" transform="rotate(74 579.6 505.8)" fill="#2a6e1a"/><ellipse cx="560.0" cy="497.7" rx="4.5" ry="2.5" transform="rotate(43 560.0 497.7)" fill="#5cb236"/><ellipse cx="583.0" cy="521.2" rx="5.1" ry="2.8" transform="rotate(119 583.0 521.2)" fill="#5cb236"/><ellipse cx="555.4" cy="478.7" rx="4.2" ry="2.3" transform="rotate(46 555.4 478.7)" fill="#5cb236"/><ellipse cx="566.7" cy="487.4" rx="4.9" ry="2.7" transform="rotate(33 566.7 487.4)" fill="#5cb236"/><ellipse cx="570.5" cy="495.0" rx="4.6" ry="2.5" transform="rotate(97 570.5 495.0)" fill="#5cb236"/><ellipse cx="569.4" cy="480.7" rx="6.0" ry="3.3" transform="rotate(71 569.4 480.7)" fill="#5cb236"/><ellipse cx="573.8" cy="505.5" rx="3.4" ry="1.9" transform="rotate(90 573.8 505.5)" fill="#8ccc4e"/><ellipse cx="586.8" cy="490.9" rx="3.0" ry="1.7" transform="rotate(94 586.8 490.9)" fill="#5cb236"/><ellipse cx="594.7" cy="498.9" rx="3.2" ry="1.8" transform="rotate(139 594.7 498.9)" fill="#5cb236"/><ellipse cx="585.2" cy="493.4" rx="5.5" ry="3.0" transform="rotate(121 585.2 493.4)" fill="#4a9e2a"/><ellipse cx="582.9" cy="501.8" rx="5.6" ry="3.1" transform="rotate(113 582.9 501.8)" fill="#4a9e2a"/><ellipse cx="548.1" cy="491.2" rx="3.9" ry="2.2" transform="rotate(38 548.1 491.2)" fill="#74c040"/><ellipse cx="540.1" cy="493.8" rx="5.3" ry="2.9" transform="rotate(75 540.1 493.8)" fill="#5cb236"/><ellipse cx="590.4" cy="488.6" rx="3.9" ry="2.1" transform="rotate(42 590.4 488.6)" fill="#5cb236"/><ellipse cx="555.2" cy="523.8" rx="3.2" ry="1.7" transform="rotate(14 555.2 523.8)" fill="#5cb236"/><ellipse cx="543.2" cy="514.1" rx="4.7" ry="2.6" transform="rotate(40 543.2 514.1)" fill="#3a8a22"/><ellipse cx="583.7" cy="480.6" rx="5.1" ry="2.8" transform="rotate(134 583.7 480.6)" fill="#74c040"/><ellipse cx="561.0" cy="485.1" rx="4.6" ry="2.5" transform="rotate(112 561.0 485.1)" fill="#2a6e1a"/><ellipse cx="555.8" cy="519.3" rx="4.0" ry="2.2" transform="rotate(129 555.8 519.3)" fill="#5cb236"/><ellipse cx="544.7" cy="490.5" rx="4.1" ry="2.2" transform="rotate(153 544.7 490.5)" fill="#74c040"/><ellipse cx="569.2" cy="475.1" rx="5.6" ry="3.1" transform="rotate(87 569.2 475.1)" fill="#8ccc4e"/><ellipse cx="559.4" cy="527.4" rx="3.5" ry="2.0" transform="rotate(154 559.4 527.4)" fill="#8ccc4e"/><ellipse cx="541.2" cy="499.4" rx="5.2" ry="2.9" transform="rotate(63 541.2 499.4)" fill="#8ccc4e"/><ellipse cx="560.2" cy="527.4" rx="3.4" ry="1.9" transform="rotate(85 560.2 527.4)" fill="#2a6e1a"/><ellipse cx="539.4" cy="494.2" rx="4.6" ry="2.5" transform="rotate(113 539.4 494.2)" fill="#74c040"/><ellipse cx="572.6" cy="499.3" rx="4.3" ry="2.4" transform="rotate(156 572.6 499.3)" fill="#2a6e1a"/><ellipse cx="567.2" cy="492.5" rx="4.1" ry="2.3" transform="rotate(54 567.2 492.5)" fill="#a6d65c"/><ellipse cx="583.4" cy="497.4" rx="3.2" ry="1.7" transform="rotate(126 583.4 497.4)" fill="#5cb236"/><ellipse cx="580.2" cy="486.8" rx="4.2" ry="2.3" transform="rotate(143 580.2 486.8)" fill="#a6d65c"/><ellipse cx="555.7" cy="511.7" rx="4.1" ry="2.3" transform="rotate(112 555.7 511.7)" fill="#74c040"/><ellipse cx="549.7" cy="516.3" rx="4.8" ry="2.6" transform="rotate(37 549.7 516.3)" fill="#3a8a22"/><ellipse cx="565.9" cy="499.6" rx="4.8" ry="2.7" transform="rotate(35 565.9 499.6)" fill="#3a8a22"/><ellipse cx="576.0" cy="490.7" rx="3.8" ry="2.1" transform="rotate(7 576.0 490.7)" fill="#2a6e1a"/><ellipse cx="590.4" cy="503.9" rx="4.6" ry="2.5" transform="rotate(93 590.4 503.9)" fill="#8ccc4e"/><ellipse cx="578.6" cy="476.1" rx="4.3" ry="2.4" transform="rotate(174 578.6 476.1)" fill="#5cb236"/><ellipse cx="548.1" cy="489.1" rx="3.7" ry="2.0" transform="rotate(35 548.1 489.1)" fill="#2a6e1a"/><ellipse cx="578.0" cy="489.6" rx="3.4" ry="1.8" transform="rotate(44 578.0 489.6)" fill="#5cb236"/><ellipse cx="559.1" cy="494.6" rx="5.4" ry="3.0" transform="rotate(97 559.1 494.6)" fill="#3a8a22"/><ellipse cx="592.4" cy="500.7" rx="4.4" ry="2.4" transform="rotate(35 592.4 500.7)" fill="#5cb236"/><ellipse cx="550.1" cy="512.8" rx="4.8" ry="2.6" transform="rotate(168 550.1 512.8)" fill="#2a6e1a"/><ellipse cx="561.4" cy="514.3" rx="5.9" ry="3.3" transform="rotate(176 561.4 514.3)" fill="#4a9e2a"/><ellipse cx="571.3" cy="494.4" rx="5.2" ry="2.9" transform="rotate(82 571.3 494.4)" fill="#a6d65c"/><ellipse cx="568.6" cy="500.6" rx="5.7" ry="3.2" transform="rotate(161 568.6 500.6)" fill="#2a6e1a"/><ellipse cx="586.8" cy="483.3" rx="4.9" ry="2.7" transform="rotate(149 586.8 483.3)" fill="#8ccc4e"/><ellipse cx="568.5" cy="515.8" rx="4.2" ry="2.3" transform="rotate(22 568.5 515.8)" fill="#4a9e2a"/><ellipse cx="585.8" cy="506.2" rx="4.6" ry="2.5" transform="rotate(146 585.8 506.2)" fill="#74c040"/><ellipse cx="571.9" cy="488.7" rx="4.4" ry="2.4" transform="rotate(137 571.9 488.7)" fill="#a6d65c"/><ellipse cx="552.5" cy="509.8" rx="5.0" ry="2.7" transform="rotate(135 552.5 509.8)" fill="#2a6e1a"/><ellipse cx="569.2" cy="521.2" rx="5.7" ry="3.1" transform="rotate(34 569.2 521.2)" fill="#8ccc4e"/><ellipse cx="550.8" cy="490.9" rx="4.1" ry="2.2" transform="rotate(149 550.8 490.9)" fill="#74c040"/><ellipse cx="581.6" cy="480.1" rx="4.3" ry="2.4" transform="rotate(110 581.6 480.1)" fill="#5cb236"/><ellipse cx="580.4" cy="481.6" rx="5.6" ry="3.1" transform="rotate(55 580.4 481.6)" fill="#2a6e1a"/><ellipse cx="569.8" cy="508.0" rx="3.4" ry="1.8" transform="rotate(128 569.8 508.0)" fill="#2a6e1a"/><ellipse cx="555.3" cy="507.5" rx="5.3" ry="2.9" transform="rotate(83 555.3 507.5)" fill="#5cb236"/><ellipse cx="548.0" cy="499.6" rx="5.0" ry="2.8" transform="rotate(14 548.0 499.6)" fill="#a6d65c"/><ellipse cx="567.5" cy="517.0" rx="3.5" ry="1.9" transform="rotate(64 567.5 517.0)" fill="#5cb236"/><ellipse cx="562.2" cy="505.0" rx="5.2" ry="2.9" transform="rotate(53 562.2 505.0)" fill="#8ccc4e"/><ellipse cx="569.6" cy="518.5" rx="3.5" ry="1.9" transform="rotate(123 569.6 518.5)" fill="#74c040"/><ellipse cx="561.8" cy="486.7" rx="4.1" ry="2.3" transform="rotate(59 561.8 486.7)" fill="#4a9e2a"/><ellipse cx="577.3" cy="521.9" rx="4.8" ry="2.6" transform="rotate(108 577.3 521.9)" fill="#2a6e1a"/><ellipse cx="547.2" cy="486.3" rx="4.1" ry="2.3" transform="rotate(20 547.2 486.3)" fill="#2a6e1a"/><ellipse cx="572.1" cy="473.3" rx="3.1" ry="1.7" transform="rotate(45 572.1 473.3)" fill="#2a6e1a"/><ellipse cx="562.8" cy="526.8" rx="4.5" ry="2.5" transform="rotate(99 562.8 526.8)" fill="#4a9e2a"/><ellipse cx="577.8" cy="473.3" rx="4.2" ry="2.3" transform="rotate(158 577.8 473.3)" fill="#8ccc4e"/><ellipse cx="553.8" cy="500.8" rx="4.3" ry="2.3" transform="rotate(36 553.8 500.8)" fill="#4a9e2a"/><ellipse cx="557.8" cy="494.7" rx="3.4" ry="1.9" transform="rotate(76 557.8 494.7)" fill="#74c040"/><ellipse cx="544.9" cy="502.5" rx="5.8" ry="3.2" transform="rotate(95 544.9 502.5)" fill="#a6d65c"/><ellipse cx="543.9" cy="500.5" rx="4.9" ry="2.7" transform="rotate(159 543.9 500.5)" fill="#a6d65c"/><ellipse cx="587.1" cy="513.5" rx="4.8" ry="2.6" transform="rotate(149 587.1 513.5)" fill="#74c040"/><ellipse cx="587.2" cy="482.4" rx="4.0" ry="2.2" transform="rotate(105 587.2 482.4)" fill="#74c040"/><ellipse cx="578.9" cy="478.0" rx="5.8" ry="3.2" transform="rotate(108 578.9 478.0)" fill="#8ccc4e"/><ellipse cx="555.2" cy="477.1" rx="4.3" ry="2.3" transform="rotate(94 555.2 477.1)" fill="#8ccc4e"/><ellipse cx="552.8" cy="493.6" rx="3.6" ry="2.0" transform="rotate(98 552.8 493.6)" fill="#4a9e2a"/><ellipse cx="562.2" cy="483.4" rx="4.0" ry="2.2" transform="rotate(124 562.2 483.4)" fill="#5cb236"/><ellipse cx="574.5" cy="515.6" rx="5.7" ry="3.1" transform="rotate(141 574.5 515.6)" fill="#5cb236"/><ellipse cx="557.6" cy="495.1" rx="4.8" ry="2.7" transform="rotate(179 557.6 495.1)" fill="#3a8a22"/><ellipse cx="572.2" cy="519.2" rx="3.4" ry="1.8" transform="rotate(141 572.2 519.2)" fill="#5cb236"/><ellipse cx="538.9" cy="493.0" rx="4.7" ry="2.6" transform="rotate(80 538.9 493.0)" fill="#a6d65c"/><ellipse cx="560.0" cy="504.0" rx="5.1" ry="2.8" transform="rotate(58 560.0 504.0)" fill="#8ccc4e"/><ellipse cx="575.3" cy="495.9" rx="4.4" ry="2.4" transform="rotate(111 575.3 495.9)" fill="#3a8a22"/><ellipse cx="576.6" cy="513.6" rx="3.6" ry="2.0" transform="rotate(146 576.6 513.6)" fill="#4a9e2a"/><ellipse cx="571.3" cy="471.8" rx="3.7" ry="2.0" transform="rotate(66 571.3 471.8)" fill="#4a9e2a"/><ellipse cx="572.3" cy="475.5" rx="3.3" ry="1.8" transform="rotate(180 572.3 475.5)" fill="#3a8a22"/><ellipse cx="571.5" cy="505.8" rx="4.0" ry="2.2" transform="rotate(29 571.5 505.8)" fill="#2a6e1a"/><ellipse cx="554.3" cy="521.9" rx="3.1" ry="1.7" transform="rotate(125 554.3 521.9)" fill="#5cb236"/><ellipse cx="563.5" cy="520.0" rx="5.7" ry="3.1" transform="rotate(112 563.5 520.0)" fill="#8ccc4e"/><ellipse cx="565.3" cy="478.9" rx="4.7" ry="2.6" transform="rotate(110 565.3 478.9)" fill="#4a9e2a"/><ellipse cx="565.0" cy="520.9" rx="5.7" ry="3.1" transform="rotate(39 565.0 520.9)" fill="#74c040"/><ellipse cx="577.4" cy="503.0" rx="3.0" ry="1.7" transform="rotate(33 577.4 503.0)" fill="#4a9e2a"/><ellipse cx="537.7" cy="498.6" rx="5.1" ry="2.8" transform="rotate(164 537.7 498.6)" fill="#a6d65c"/><ellipse cx="561.8" cy="503.8" rx="4.7" ry="2.6" transform="rotate(91 561.8 503.8)" fill="#74c040"/><ellipse cx="569.4" cy="510.5" rx="3.2" ry="1.8" transform="rotate(109 569.4 510.5)" fill="#4a9e2a"/><ellipse cx="565.2" cy="488.3" rx="4.0" ry="2.2" transform="rotate(154 565.2 488.3)" fill="#74c040"/><ellipse cx="564.2" cy="484.8" rx="4.9" ry="2.7" transform="rotate(174 564.2 484.8)" fill="#3a8a22"/><ellipse cx="567.6" cy="501.4" rx="4.9" ry="2.7" transform="rotate(132 567.6 501.4)" fill="#3a8a22"/><ellipse cx="550.9" cy="511.9" rx="4.8" ry="2.7" transform="rotate(67 550.9 511.9)" fill="#4a9e2a"/><ellipse cx="577.8" cy="523.1" rx="3.8" ry="2.1" transform="rotate(178 577.8 523.1)" fill="#3a8a22"/><ellipse cx="563.9" cy="500.7" rx="4.6" ry="2.5" transform="rotate(83 563.9 500.7)" fill="#8ccc4e"/></g>
<g><circle cx="576.1" cy="485.6" r="1.4" fill="#141a10"/><circle cx="573.7" cy="486.4" r="1.4" fill="#141a10"/><circle cx="572.9" cy="485.3" r="1.4" fill="#141a10"/><circle cx="574.0" cy="483.3" r="1.4" fill="#141a10"/><circle cx="575.5" cy="483.6" r="1.4" fill="#141a10"/><circle cx="571.1" cy="518.6" r="1.8" fill="#1e1a22"/><circle cx="569.3" cy="520.2" r="1.8" fill="#1e1a22"/><circle cx="566.9" cy="518.6" r="1.8" fill="#1e1a22"/><circle cx="567.9" cy="516.2" r="1.8" fill="#1e1a22"/><circle cx="571.1" cy="517.5" r="1.8" fill="#1e1a22"/><circle cx="585.0" cy="514.6" r="1.5" fill="#141a10"/><circle cx="583.7" cy="516.3" r="1.5" fill="#141a10"/><circle cx="581.4" cy="515.1" r="1.5" fill="#141a10"/><circle cx="581.9" cy="513.3" r="1.5" fill="#141a10"/><circle cx="584.6" cy="513.4" r="1.5" fill="#141a10"/><circle cx="564.9" cy="525.4" r="1.7" fill="#3a2a40"/><circle cx="563.9" cy="525.9" r="1.7" fill="#3a2a40"/><circle cx="561.6" cy="523.9" r="1.7" fill="#3a2a40"/><circle cx="563.0" cy="521.9" r="1.7" fill="#3a2a40"/><circle cx="565.5" cy="522.9" r="1.7" fill="#3a2a40"/><circle cx="575.5" cy="518.0" r="1.6" fill="#1e1a22"/><circle cx="573.7" cy="518.3" r="1.6" fill="#1e1a22"/><circle cx="572.3" cy="516.4" r="1.6" fill="#1e1a22"/><circle cx="573.3" cy="514.7" r="1.6" fill="#1e1a22"/><circle cx="575.1" cy="514.6" r="1.6" fill="#1e1a22"/><circle cx="579.4" cy="499.7" r="1.5" fill="#1e1a22"/><circle cx="577.1" cy="501.3" r="1.5" fill="#1e1a22"/><circle cx="575.6" cy="499.7" r="1.5" fill="#1e1a22"/><circle cx="576.3" cy="498.0" r="1.5" fill="#1e1a22"/><circle cx="579.3" cy="498.8" r="1.5" fill="#1e1a22"/><circle cx="565.4" cy="501.2" r="1.6" fill="#141a10"/><circle cx="563.0" cy="503.0" r="1.6" fill="#141a10"/><circle cx="561.5" cy="501.3" r="1.6" fill="#141a10"/><circle cx="561.8" cy="499.9" r="1.6" fill="#141a10"/><circle cx="564.6" cy="499.5" r="1.6" fill="#141a10"/><circle cx="560.1" cy="525.2" r="1.6" fill="#1e1a22"/><circle cx="558.7" cy="525.7" r="1.6" fill="#1e1a22"/><circle cx="556.8" cy="523.9" r="1.6" fill="#1e1a22"/><circle cx="557.7" cy="522.0" r="1.6" fill="#1e1a22"/><circle cx="560.4" cy="522.6" r="1.6" fill="#1e1a22"/><circle cx="584.8" cy="515.9" r="1.5" fill="#141a10"/><circle cx="583.1" cy="516.4" r="1.5" fill="#141a10"/><circle cx="581.7" cy="514.4" r="1.5" fill="#141a10"/><circle cx="582.7" cy="513.0" r="1.5" fill="#141a10"/><circle cx="584.9" cy="513.6" r="1.5" fill="#141a10"/><circle cx="587.9" cy="510.9" r="1.6" fill="#3a2a40"/><circle cx="586.4" cy="512.8" r="1.6" fill="#3a2a40"/><circle cx="584.0" cy="510.8" r="1.6" fill="#3a2a40"/><circle cx="585.9" cy="508.9" r="1.6" fill="#3a2a40"/><circle cx="587.3" cy="509.4" r="1.6" fill="#3a2a40"/><circle cx="562.7" cy="479.8" r="1.6" fill="#1e1a22"/><circle cx="559.8" cy="480.7" r="1.6" fill="#1e1a22"/><circle cx="559.1" cy="479.7" r="1.6" fill="#1e1a22"/><circle cx="560.1" cy="477.5" r="1.6" fill="#1e1a22"/><circle cx="562.5" cy="478.1" r="1.6" fill="#1e1a22"/><circle cx="573.0" cy="477.0" r="1.5" fill="#141a10"/><circle cx="570.8" cy="477.6" r="1.5" fill="#141a10"/><circle cx="569.8" cy="475.4" r="1.5" fill="#141a10"/><circle cx="570.7" cy="474.3" r="1.5" fill="#141a10"/><circle cx="572.4" cy="474.4" r="1.5" fill="#141a10"/><circle cx="564.3" cy="505.4" r="1.5" fill="#3a2a40"/><circle cx="562.3" cy="507.1" r="1.5" fill="#3a2a40"/><circle cx="560.7" cy="505.7" r="1.5" fill="#3a2a40"/><circle cx="561.4" cy="503.8" r="1.5" fill="#3a2a40"/><circle cx="564.0" cy="504.3" r="1.5" fill="#3a2a40"/><circle cx="583.8" cy="490.8" r="1.6" fill="#1e1a22"/><circle cx="582.1" cy="491.7" r="1.6" fill="#1e1a22"/><circle cx="580.2" cy="490.1" r="1.6" fill="#1e1a22"/><circle cx="580.6" cy="488.6" r="1.6" fill="#1e1a22"/><circle cx="583.8" cy="488.8" r="1.6" fill="#1e1a22"/><circle cx="568.0" cy="483.7" r="1.7" fill="#1e1a22"/><circle cx="566.5" cy="484.7" r="1.7" fill="#1e1a22"/><circle cx="564.1" cy="482.1" r="1.7" fill="#1e1a22"/><circle cx="565.7" cy="480.5" r="1.7" fill="#1e1a22"/><circle cx="566.8" cy="480.6" r="1.7" fill="#1e1a22"/><circle cx="545.8" cy="513.8" r="1.7" fill="#1e1a22"/><circle cx="543.9" cy="514.9" r="1.7" fill="#1e1a22"/><circle cx="542.0" cy="513.1" r="1.7" fill="#1e1a22"/><circle cx="543.0" cy="511.0" r="1.7" fill="#1e1a22"/><circle cx="545.0" cy="511.1" r="1.7" fill="#1e1a22"/><circle cx="550.3" cy="513.7" r="1.7" fill="#141a10"/><circle cx="547.1" cy="515.1" r="1.7" fill="#141a10"/><circle cx="546.1" cy="512.9" r="1.7" fill="#141a10"/><circle cx="547.7" cy="511.2" r="1.7" fill="#141a10"/><circle cx="550.3" cy="512.7" r="1.7" fill="#141a10"/><circle cx="584.2" cy="518.5" r="1.8" fill="#141a10"/><circle cx="582.2" cy="520.5" r="1.8" fill="#141a10"/><circle cx="579.8" cy="517.7" r="1.8" fill="#141a10"/><circle cx="581.1" cy="516.2" r="1.8" fill="#141a10"/><circle cx="582.9" cy="516.3" r="1.8" fill="#141a10"/><circle cx="542.6" cy="513.9" r="1.4" fill="#3a2a40"/><circle cx="541.2" cy="514.4" r="1.4" fill="#3a2a40"/><circle cx="539.7" cy="513.1" r="1.4" fill="#3a2a40"/><circle cx="540.5" cy="511.1" r="1.4" fill="#3a2a40"/><circle cx="543.0" cy="512.0" r="1.4" fill="#3a2a40"/><circle cx="567.8" cy="504.5" r="1.9" fill="#1e1a22"/><circle cx="566.1" cy="505.6" r="1.9" fill="#1e1a22"/><circle cx="563.9" cy="504.4" r="1.9" fill="#1e1a22"/><circle cx="564.4" cy="501.6" r="1.9" fill="#1e1a22"/><circle cx="567.0" cy="501.3" r="1.9" fill="#1e1a22"/><circle cx="548.3" cy="516.6" r="1.8" fill="#1e1a22"/><circle cx="544.9" cy="517.9" r="1.8" fill="#1e1a22"/><circle cx="544.0" cy="516.7" r="1.8" fill="#1e1a22"/><circle cx="544.8" cy="514.3" r="1.8" fill="#1e1a22"/><circle cx="547.2" cy="514.1" r="1.8" fill="#1e1a22"/><circle cx="547.3" cy="495.1" r="1.6" fill="#3a2a40"/><circle cx="544.9" cy="495.7" r="1.6" fill="#3a2a40"/><circle cx="544.0" cy="494.7" r="1.6" fill="#3a2a40"/><circle cx="544.4" cy="492.7" r="1.6" fill="#3a2a40"/><circle cx="546.8" cy="492.4" r="1.6" fill="#3a2a40"/><ellipse cx="546.1" cy="487.7" rx="3" ry="1.6" fill="#d8d860" transform="rotate(30 546.1 487.7)"/><ellipse cx="558.2" cy="511.1" rx="3" ry="1.6" fill="#d8d860" transform="rotate(30 558.2 511.1)"/><ellipse cx="559.2" cy="509.5" rx="3" ry="1.6" fill="#d8d860" transform="rotate(30 559.2 509.5)"/><ellipse cx="572.4" cy="519.1" rx="3" ry="1.6" fill="#d8d860" transform="rotate(30 572.4 519.1)"/><ellipse cx="569.4" cy="482.3" rx="3" ry="1.6" fill="#d8d860" transform="rotate(30 569.4 482.3)"/></g>
<circle cx="973.6" cy="503.3" r="19" fill="#8a6236" stroke="#2a1a0a" stroke-width="1"/>
<g><ellipse cx="957.7" cy="507.4" rx="4.4" ry="2.4" transform="rotate(130 957.7 507.4)" fill="#a6d65c"/><ellipse cx="977.3" cy="496.1" rx="4.5" ry="2.5" transform="rotate(161 977.3 496.1)" fill="#a6d65c"/><ellipse cx="965.5" cy="497.3" rx="3.9" ry="2.2" transform="rotate(23 965.5 497.3)" fill="#2a6e1a"/><ellipse cx="953.7" cy="498.5" rx="3.1" ry="1.7" transform="rotate(101 953.7 498.5)" fill="#4a9e2a"/><ellipse cx="987.8" cy="499.4" rx="5.0" ry="2.7" transform="rotate(159 987.8 499.4)" fill="#74c040"/><ellipse cx="986.5" cy="504.4" rx="3.1" ry="1.7" transform="rotate(61 986.5 504.4)" fill="#3a8a22"/><ellipse cx="957.7" cy="492.7" rx="4.3" ry="2.4" transform="rotate(50 957.7 492.7)" fill="#8ccc4e"/><ellipse cx="956.1" cy="501.1" rx="3.0" ry="1.7" transform="rotate(21 956.1 501.1)" fill="#2a6e1a"/><ellipse cx="961.8" cy="505.8" rx="6.0" ry="3.3" transform="rotate(21 961.8 505.8)" fill="#74c040"/><ellipse cx="969.1" cy="492.2" rx="4.5" ry="2.5" transform="rotate(7 969.1 492.2)" fill="#5cb236"/><ellipse cx="987.8" cy="510.5" rx="3.3" ry="1.8" transform="rotate(74 987.8 510.5)" fill="#2a6e1a"/><ellipse cx="957.2" cy="515.8" rx="5.1" ry="2.8" transform="rotate(54 957.2 515.8)" fill="#a6d65c"/><ellipse cx="976.8" cy="521.5" rx="4.1" ry="2.3" transform="rotate(101 976.8 521.5)" fill="#2a6e1a"/><ellipse cx="958.8" cy="510.3" rx="5.3" ry="2.9" transform="rotate(69 958.8 510.3)" fill="#5cb236"/><ellipse cx="966.2" cy="512.5" rx="5.9" ry="3.2" transform="rotate(30 966.2 512.5)" fill="#3a8a22"/><ellipse cx="983.2" cy="515.6" rx="3.2" ry="1.7" transform="rotate(124 983.2 515.6)" fill="#3a8a22"/><ellipse cx="978.6" cy="516.4" rx="4.5" ry="2.5" transform="rotate(33 978.6 516.4)" fill="#2a6e1a"/><ellipse cx="961.2" cy="509.0" rx="4.3" ry="2.3" transform="rotate(54 961.2 509.0)" fill="#2a6e1a"/><ellipse cx="990.6" cy="503.1" rx="4.8" ry="2.6" transform="rotate(5 990.6 503.1)" fill="#a6d65c"/><ellipse cx="975.1" cy="515.2" rx="4.8" ry="2.6" transform="rotate(147 975.1 515.2)" fill="#a6d65c"/><ellipse cx="988.1" cy="514.7" rx="4.3" ry="2.4" transform="rotate(2 988.1 514.7)" fill="#5cb236"/><ellipse cx="973.6" cy="491.6" rx="4.2" ry="2.3" transform="rotate(19 973.6 491.6)" fill="#8ccc4e"/><ellipse cx="984.9" cy="511.2" rx="3.0" ry="1.7" transform="rotate(94 984.9 511.2)" fill="#5cb236"/><ellipse cx="962.7" cy="512.7" rx="4.5" ry="2.4" transform="rotate(147 962.7 512.7)" fill="#74c040"/><ellipse cx="980.2" cy="512.4" rx="3.5" ry="1.9" transform="rotate(58 980.2 512.4)" fill="#4a9e2a"/><ellipse cx="976.1" cy="493.9" rx="3.5" ry="1.9" transform="rotate(161 976.1 493.9)" fill="#5cb236"/><ellipse cx="980.3" cy="499.8" rx="5.6" ry="3.1" transform="rotate(154 980.3 499.8)" fill="#2a6e1a"/><ellipse cx="975.8" cy="505.1" rx="3.1" ry="1.7" transform="rotate(65 975.8 505.1)" fill="#3a8a22"/><ellipse cx="973.2" cy="519.7" rx="4.3" ry="2.3" transform="rotate(152 973.2 519.7)" fill="#8ccc4e"/><ellipse cx="957.6" cy="503.8" rx="5.9" ry="3.3" transform="rotate(32 957.6 503.8)" fill="#4a9e2a"/><ellipse cx="974.0" cy="517.8" rx="4.8" ry="2.7" transform="rotate(18 974.0 517.8)" fill="#a6d65c"/><ellipse cx="968.4" cy="521.8" rx="5.2" ry="2.9" transform="rotate(17 968.4 521.8)" fill="#5cb236"/><ellipse cx="970.4" cy="516.3" rx="3.1" ry="1.7" transform="rotate(72 970.4 516.3)" fill="#3a8a22"/><ellipse cx="961.7" cy="514.1" rx="3.3" ry="1.8" transform="rotate(35 961.7 514.1)" fill="#5cb236"/><ellipse cx="987.3" cy="490.5" rx="5.2" ry="2.9" transform="rotate(133 987.3 490.5)" fill="#4a9e2a"/><ellipse cx="965.5" cy="499.2" rx="5.8" ry="3.2" transform="rotate(121 965.5 499.2)" fill="#3a8a22"/><ellipse cx="986.2" cy="494.0" rx="3.1" ry="1.7" transform="rotate(162 986.2 494.0)" fill="#3a8a22"/><ellipse cx="976.6" cy="505.4" rx="4.0" ry="2.2" transform="rotate(18 976.6 505.4)" fill="#8ccc4e"/><ellipse cx="985.2" cy="509.7" rx="3.1" ry="1.7" transform="rotate(180 985.2 509.7)" fill="#4a9e2a"/><ellipse cx="985.5" cy="517.3" rx="4.1" ry="2.2" transform="rotate(175 985.5 517.3)" fill="#8ccc4e"/><ellipse cx="966.5" cy="503.9" rx="4.3" ry="2.3" transform="rotate(7 966.5 503.9)" fill="#a6d65c"/><ellipse cx="981.9" cy="491.6" rx="5.0" ry="2.7" transform="rotate(97 981.9 491.6)" fill="#74c040"/><ellipse cx="958.5" cy="495.3" rx="3.3" ry="1.8" transform="rotate(29 958.5 495.3)" fill="#3a8a22"/><ellipse cx="990.7" cy="502.2" rx="4.0" ry="2.2" transform="rotate(177 990.7 502.2)" fill="#4a9e2a"/><ellipse cx="960.4" cy="496.5" rx="4.6" ry="2.5" transform="rotate(132 960.4 496.5)" fill="#a6d65c"/><ellipse cx="972.0" cy="499.5" rx="3.3" ry="1.8" transform="rotate(5 972.0 499.5)" fill="#74c040"/><ellipse cx="974.1" cy="519.6" rx="5.3" ry="2.9" transform="rotate(168 974.1 519.6)" fill="#2a6e1a"/><ellipse cx="980.9" cy="498.2" rx="4.1" ry="2.3" transform="rotate(36 980.9 498.2)" fill="#3a8a22"/><ellipse cx="968.1" cy="494.9" rx="5.3" ry="2.9" transform="rotate(87 968.1 494.9)" fill="#5cb236"/><ellipse cx="964.9" cy="491.8" rx="4.0" ry="2.2" transform="rotate(170 964.9 491.8)" fill="#5cb236"/><ellipse cx="971.9" cy="518.9" rx="5.4" ry="3.0" transform="rotate(51 971.9 518.9)" fill="#a6d65c"/><ellipse cx="981.1" cy="494.5" rx="5.8" ry="3.2" transform="rotate(53 981.1 494.5)" fill="#74c040"/><ellipse cx="981.2" cy="513.6" rx="5.7" ry="3.1" transform="rotate(10 981.2 513.6)" fill="#a6d65c"/><ellipse cx="967.3" cy="484.1" rx="5.5" ry="3.0" transform="rotate(28 967.3 484.1)" fill="#8ccc4e"/><ellipse cx="962.0" cy="506.2" rx="5.5" ry="3.0" transform="rotate(97 962.0 506.2)" fill="#5cb236"/><ellipse cx="962.1" cy="493.0" rx="5.1" ry="2.8" transform="rotate(159 962.1 493.0)" fill="#8ccc4e"/><ellipse cx="966.8" cy="504.6" rx="3.8" ry="2.1" transform="rotate(155 966.8 504.6)" fill="#3a8a22"/><ellipse cx="988.3" cy="507.3" rx="4.1" ry="2.2" transform="rotate(166 988.3 507.3)" fill="#74c040"/><ellipse cx="972.7" cy="500.3" rx="4.2" ry="2.3" transform="rotate(48 972.7 500.3)" fill="#5cb236"/><ellipse cx="990.0" cy="505.8" rx="5.3" ry="2.9" transform="rotate(12 990.0 505.8)" fill="#5cb236"/><ellipse cx="978.8" cy="502.3" rx="4.9" ry="2.7" transform="rotate(167 978.8 502.3)" fill="#3a8a22"/><ellipse cx="964.3" cy="493.6" rx="5.1" ry="2.8" transform="rotate(51 964.3 493.6)" fill="#3a8a22"/><ellipse cx="976.5" cy="493.9" rx="3.0" ry="1.7" transform="rotate(120 976.5 493.9)" fill="#4a9e2a"/><ellipse cx="968.3" cy="502.2" rx="3.8" ry="2.1" transform="rotate(88 968.3 502.2)" fill="#5cb236"/><ellipse cx="953.1" cy="498.2" rx="4.8" ry="2.7" transform="rotate(40 953.1 498.2)" fill="#74c040"/><ellipse cx="958.0" cy="514.0" rx="3.3" ry="1.8" transform="rotate(99 958.0 514.0)" fill="#5cb236"/><ellipse cx="981.2" cy="512.8" rx="5.7" ry="3.1" transform="rotate(1 981.2 512.8)" fill="#4a9e2a"/><ellipse cx="961.2" cy="513.5" rx="5.4" ry="3.0" transform="rotate(87 961.2 513.5)" fill="#74c040"/><ellipse cx="956.3" cy="506.6" rx="3.3" ry="1.8" transform="rotate(164 956.3 506.6)" fill="#5cb236"/><ellipse cx="978.2" cy="499.8" rx="5.7" ry="3.1" transform="rotate(22 978.2 499.8)" fill="#5cb236"/></g>
<ellipse cx="948.6" cy="493.7" rx="2.6" ry="1.3" transform="rotate(248 948.6 493.7)" fill="#8ccc4e"/>
<ellipse cx="945.9" cy="497.3" rx="2.6" ry="1.3" transform="rotate(176 945.9 497.3)" fill="#5aa83a"/>
<ellipse cx="947.8" cy="496.8" rx="2.6" ry="1.3" transform="rotate(185 947.8 496.8)" fill="#8ccc4e"/>
<ellipse cx="946.7" cy="496.8" rx="2.6" ry="1.3" transform="rotate(184 946.7 496.8)" fill="#8ccc4e"/>
<ellipse cx="948.0" cy="496.3" rx="2.6" ry="1.3" transform="rotate(199 948.0 496.3)" fill="#5aa83a"/>
<ellipse cx="971.7" cy="481.9" rx="2.6" ry="1.3" transform="rotate(263 971.7 481.9)" fill="#3a8a22"/>
<ellipse cx="970.8" cy="479.8" rx="2.6" ry="1.3" transform="rotate(254 970.8 479.8)" fill="#5aa83a"/>
<ellipse cx="971.7" cy="479.0" rx="2.6" ry="1.3" transform="rotate(267 971.7 479.0)" fill="#3a8a22"/>
<ellipse cx="972.1" cy="480.0" rx="2.6" ry="1.3" transform="rotate(272 972.1 480.0)" fill="#8ccc4e"/>
<ellipse cx="974.4" cy="481.5" rx="2.6" ry="1.3" transform="rotate(315 974.4 481.5)" fill="#3a8a22"/>
<ellipse cx="982.5" cy="484.4" rx="2.6" ry="1.3" transform="rotate(259 982.5 484.4)" fill="#3a8a22"/>
<ellipse cx="985.6" cy="483.4" rx="2.6" ry="1.3" transform="rotate(306 985.6 483.4)" fill="#3a8a22"/>
<ellipse cx="985.5" cy="484.4" rx="2.6" ry="1.3" transform="rotate(314 985.5 484.4)" fill="#3a8a22"/>
<ellipse cx="983.4" cy="483.0" rx="2.6" ry="1.3" transform="rotate(276 983.4 483.0)" fill="#3a8a22"/>
<ellipse cx="983.1" cy="482.4" rx="2.6" ry="1.3" transform="rotate(271 983.1 482.4)" fill="#3a8a22"/>
<ellipse cx="977.5" cy="526.7" rx="2.6" ry="1.3" transform="rotate(82 977.5 526.7)" fill="#5aa83a"/>
<ellipse cx="977.8" cy="525.2" rx="2.6" ry="1.3" transform="rotate(71 977.8 525.2)" fill="#5aa83a"/>
<ellipse cx="977.0" cy="525.1" rx="2.6" ry="1.3" transform="rotate(91 977.0 525.1)" fill="#5aa83a"/>
<ellipse cx="977.5" cy="526.2" rx="2.6" ry="1.3" transform="rotate(82 977.5 526.2)" fill="#3a8a22"/>
<ellipse cx="978.7" cy="524.5" rx="2.6" ry="1.3" transform="rotate(42 978.7 524.5)" fill="#5aa83a"/>
<ellipse cx="954.0" cy="517.5" rx="2.6" ry="1.3" transform="rotate(107 954.0 517.5)" fill="#8ccc4e"/>
<ellipse cx="950.7" cy="513.1" rx="2.6" ry="1.3" transform="rotate(192 950.7 513.1)" fill="#8ccc4e"/>
<ellipse cx="952.9" cy="516.7" rx="2.6" ry="1.3" transform="rotate(127 952.9 516.7)" fill="#5aa83a"/>
<ellipse cx="951.7" cy="517.4" rx="2.6" ry="1.3" transform="rotate(134 951.7 517.4)" fill="#8ccc4e"/>
<ellipse cx="952.9" cy="515.1" rx="2.6" ry="1.3" transform="rotate(152 952.9 515.1)" fill="#8ccc4e"/>
<circle cx="968.6" cy="493.0" r="2.2" fill="#d8d050" stroke="#111" stroke-width="0.8"/><circle cx="967.7" cy="495.9" r="2.2" fill="#d8d050" stroke="#111" stroke-width="0.8"/><circle cx="965.2" cy="497.7" r="2.2" fill="#d8d050" stroke="#111" stroke-width="0.8"/><circle cx="962.2" cy="497.7" r="2.2" fill="#d8d050" stroke="#111" stroke-width="0.8"/><circle cx="959.7" cy="495.9" r="2.2" fill="#d8d050" stroke="#111" stroke-width="0.8"/><circle cx="958.8" cy="493.0" r="2.2" fill="#d8d050" stroke="#111" stroke-width="0.8"/><circle cx="959.7" cy="490.1" r="2.2" fill="#d8d050" stroke="#111" stroke-width="0.8"/><circle cx="962.2" cy="488.3" r="2.2" fill="#d8d050" stroke="#111" stroke-width="0.8"/><circle cx="965.2" cy="488.3" r="2.2" fill="#d8d050" stroke="#111" stroke-width="0.8"/><circle cx="967.7" cy="490.1" r="2.2" fill="#d8d050" stroke="#111" stroke-width="0.8"/><circle cx="963.7" cy="493" r="3.0" fill="#3a3010" stroke="#111" stroke-width="0.8"/>
<circle cx="983.1" cy="492.2" r="1.8" fill="#ffffff" stroke="#111" stroke-width="0.8"/><circle cx="982.3" cy="494.6" r="1.8" fill="#ffffff" stroke="#111" stroke-width="0.8"/><circle cx="980.3" cy="496.1" r="1.8" fill="#ffffff" stroke="#111" stroke-width="0.8"/><circle cx="977.7" cy="496.1" r="1.8" fill="#ffffff" stroke="#111" stroke-width="0.8"/><circle cx="975.7" cy="494.6" r="1.8" fill="#ffffff" stroke="#111" stroke-width="0.8"/><circle cx="974.9" cy="492.2" r="1.8" fill="#ffffff" stroke="#111" stroke-width="0.8"/><circle cx="975.7" cy="489.8" r="1.8" fill="#ffffff" stroke="#111" stroke-width="0.8"/><circle cx="977.7" cy="488.3" r="1.8" fill="#ffffff" stroke="#111" stroke-width="0.8"/><circle cx="980.3" cy="488.3" r="1.8" fill="#ffffff" stroke="#111" stroke-width="0.8"/><circle cx="982.3" cy="489.8" r="1.8" fill="#ffffff" stroke="#111" stroke-width="0.8"/><circle cx="979" cy="492.2" r="2.5" fill="#2a2a2a" stroke="#111" stroke-width="0.8"/>
<circle cx="959.8" cy="504.9" r="1.8" fill="#ffffff" stroke="#111" stroke-width="0.8"/><circle cx="959.0" cy="507.3" r="1.8" fill="#ffffff" stroke="#111" stroke-width="0.8"/><circle cx="957.0" cy="508.8" r="1.8" fill="#ffffff" stroke="#111" stroke-width="0.8"/><circle cx="954.4" cy="508.8" r="1.8" fill="#ffffff" stroke="#111" stroke-width="0.8"/><circle cx="952.4" cy="507.3" r="1.8" fill="#ffffff" stroke="#111" stroke-width="0.8"/><circle cx="951.6" cy="504.9" r="1.8" fill="#ffffff" stroke="#111" stroke-width="0.8"/><circle cx="952.4" cy="502.5" r="1.8" fill="#ffffff" stroke="#111" stroke-width="0.8"/><circle cx="954.4" cy="501.0" r="1.8" fill="#ffffff" stroke="#111" stroke-width="0.8"/><circle cx="957.0" cy="501.0" r="1.8" fill="#ffffff" stroke="#111" stroke-width="0.8"/><circle cx="959.0" cy="502.5" r="1.8" fill="#ffffff" stroke="#111" stroke-width="0.8"/><circle cx="955.7" cy="504.9" r="2.5" fill="#2a2030" stroke="#111" stroke-width="0.8"/>
<circle cx="975.0" cy="504.0" r="1.6" fill="#4a6a20" stroke="#111" stroke-width="0.8"/><circle cx="974.3" cy="506.2" r="1.6" fill="#4a6a20" stroke="#111" stroke-width="0.8"/><circle cx="972.5" cy="507.6" r="1.6" fill="#4a6a20" stroke="#111" stroke-width="0.8"/><circle cx="970.1" cy="507.6" r="1.6" fill="#4a6a20" stroke="#111" stroke-width="0.8"/><circle cx="968.3" cy="506.2" r="1.6" fill="#4a6a20" stroke="#111" stroke-width="0.8"/><circle cx="967.6" cy="504.0" r="1.6" fill="#4a6a20" stroke="#111" stroke-width="0.8"/><circle cx="968.3" cy="501.8" r="1.6" fill="#4a6a20" stroke="#111" stroke-width="0.8"/><circle cx="970.1" cy="500.4" r="1.6" fill="#4a6a20" stroke="#111" stroke-width="0.8"/><circle cx="972.5" cy="500.4" r="1.6" fill="#4a6a20" stroke="#111" stroke-width="0.8"/><circle cx="974.3" cy="501.8" r="1.6" fill="#4a6a20" stroke="#111" stroke-width="0.8"/><circle cx="971.3" cy="504" r="2.3" fill="#2a2010" stroke="#111" stroke-width="0.8"/>
<circle cx="973.1" cy="516.3" r="1.9" fill="#d8d050" stroke="#111" stroke-width="0.8"/><circle cx="972.3" cy="518.9" r="1.9" fill="#d8d050" stroke="#111" stroke-width="0.8"/><circle cx="970.1" cy="520.5" r="1.9" fill="#d8d050" stroke="#111" stroke-width="0.8"/><circle cx="967.3" cy="520.5" r="1.9" fill="#d8d050" stroke="#111" stroke-width="0.8"/><circle cx="965.1" cy="518.9" r="1.9" fill="#d8d050" stroke="#111" stroke-width="0.8"/><circle cx="964.3" cy="516.3" r="1.9" fill="#d8d050" stroke="#111" stroke-width="0.8"/><circle cx="965.1" cy="513.7" r="1.9" fill="#d8d050" stroke="#111" stroke-width="0.8"/><circle cx="967.3" cy="512.1" r="1.9" fill="#d8d050" stroke="#111" stroke-width="0.8"/><circle cx="970.1" cy="512.1" r="1.9" fill="#d8d050" stroke="#111" stroke-width="0.8"/><circle cx="972.3" cy="513.7" r="1.9" fill="#d8d050" stroke="#111" stroke-width="0.8"/><circle cx="968.7" cy="516.3" r="2.7" fill="#3a3010" stroke="#111" stroke-width="0.8"/>
<circle cx="988.7" cy="511.7" r="2.4" fill="#ffffff" stroke="#111" stroke-width="0.8"/><circle cx="987.7" cy="514.9" r="2.4" fill="#ffffff" stroke="#111" stroke-width="0.8"/><circle cx="985.0" cy="516.9" r="2.4" fill="#ffffff" stroke="#111" stroke-width="0.8"/><circle cx="981.6" cy="516.9" r="2.4" fill="#ffffff" stroke="#111" stroke-width="0.8"/><circle cx="978.9" cy="514.9" r="2.4" fill="#ffffff" stroke="#111" stroke-width="0.8"/><circle cx="977.9" cy="511.7" r="2.4" fill="#ffffff" stroke="#111" stroke-width="0.8"/><circle cx="978.9" cy="508.5" r="2.4" fill="#ffffff" stroke="#111" stroke-width="0.8"/><circle cx="981.6" cy="506.5" r="2.4" fill="#ffffff" stroke="#111" stroke-width="0.8"/><circle cx="985.0" cy="506.5" r="2.4" fill="#ffffff" stroke="#111" stroke-width="0.8"/><circle cx="987.7" cy="508.5" r="2.4" fill="#ffffff" stroke="#111" stroke-width="0.8"/><circle cx="983.3" cy="511.7" r="3.4" fill="#2a2a2a" stroke="#111" stroke-width="0.8"/>
<path d="M1012.5 351.5 H1019.5 V260.8 H1068.3 V361.7 H1060.5" fill="none" stroke="#333" stroke-width="1.1"/>
<rect x="1043.5" y="268" width="16.6" height="180.3" fill="#fff" stroke="#b8b8b8" stroke-width="1"/>
<text transform="translate(1048 283.6) rotate(90)" font-family="Liberation Sans" fill="#333" stroke="#333" stroke-width="0.25" font-size="11" textLength="150" lengthAdjust="spacingAndGlyphs">R<tspan font-size="9">ECEPTION</tspan> D<tspan font-size="9">ESIGN</tspan> 1: M<tspan font-size="9">IKE</tspan> J<tspan font-size="9">ONES</tspan></text>
<text x="764" y="437.8" font-family="Liberation Sans" fill="#b4b4b4" font-size="28.5" textLength="125" lengthAdjust="spacingAndGlyphs">R<tspan font-size="22.5">ECEPTION</tspan></text>
</g>
<path d="M790.5 394.5 V420.5 L796.2 415 L800.8 424.2 L804.2 422.6 L799.8 413.6 H808.8 Z" fill="#fff" stroke="#1a1a1a" stroke-width="1"/>
</svg>
<!-- ===== STATUS BAR ===== -->
<div class="a" style="left:27px;top:638px;width:1210px;height:22px;background:#3a54a4"></div>
<div class="t" style="left:35px;top:644px;color:#fff;font-size:11.5px;letter-spacing:-0.3px">Page 3 of 5</div>
<div class="t" style="left:110px;top:644px;color:#fff;font-size:11.5px;letter-spacing:-0.1px">English (United States)</div>

<!-- ===== TASKBAR ===== -->
<div class="a" style="left:0;top:681px;width:1280px;height:39px;background:#0e181d"></div>
<div class="a" style="left:48px;top:681px;width:344px;height:39px;background:#3a3a3a"></div>
<div class="t" style="left:60px;top:694px;color:#a0a0a0;font-size:15px;letter-spacing:-0.1px">Search the web and Windows</div>
<div class="t" style="left:307px;top:613px;letter-spacing:-0.3px;">Title Page</div>
<div class="t" style="left:392.5px;top:613px;">Contents</div>
<div class="t" style="left:472.5px;top:613px;font-weight:bold;color:#3d5591;letter-spacing:-0.3px;">Reception Plan</div>
<div class="t" style="left:589px;top:613px;letter-spacing:-0.25px;">Street Map</div>
<div class="t" style="left:680px;top:613px;">Metro Map</div>
<div class="t" style="left:774px;top:613px;font-style:italic;letter-spacing:0px;">VBackground-1</div>
<div class="t" style="left:888.5px;top:613px;">All</div>
<div class="sep" style="left:376px;top:608px;height:21px;background:#e4e4e4"></div>
<div class="sep" style="left:456px;top:608px;height:21px;background:#e4e4e4"></div>
<div class="sep" style="left:571px;top:608px;height:21px;background:#e4e4e4"></div>
<div class="sep" style="left:664px;top:608px;height:21px;background:#e4e4e4"></div>
<div class="sep" style="left:756px;top:608px;height:21px;background:#e4e4e4"></div>
<div class="sep" style="left:874px;top:608px;height:21px;background:#e4e4e4"></div>
<div class="sep" style="left:933px;top:608px;height:21px;background:#e4e4e4"></div>
<svg style="left:906px;top:614px" width="10" height="6" viewBox="0 0 10 6"><path d="M1 5.5 L5 1 L9 5.5 Z" fill="#555"/></svg>
<svg style="left:943px;top:611px" width="18" height="18" viewBox="0 0 18 18"><circle cx="8.6" cy="8" r="7" fill="none" stroke="#444" stroke-width="1.3"/><path d="M8.6 4V12M4.6 8H12.6" stroke="#444" stroke-width="1.6"/></svg>
<svg style="left:246px;top:642px" width="14" height="13" viewBox="0 0 14 13" fill="#fff"><circle cx="3.5" cy="3" r="2.5"/><rect x="7" y="1" width="6" height="4"/><rect x="1" y="6" width="12" height="6.5" fill="none" stroke="#fff"/><path d="M1 9H13M5 6V12.5M9 6V12.5" stroke="#fff"/></svg>
<svg style="left:971px;top:643px" width="14" height="12" viewBox="0 0 14 12" fill="none" stroke="#fff" stroke-width="1.2"><rect x="1" y="1" width="12" height="6"/><path d="M7 7V11M4 11H10"/></svg>
<div class="a" style="left:1002px;top:648px;width:6px;height:2px;background:#fff"></div>
<div class="a" style="left:1012px;top:648px;width:100px;height:1px;background:#e8ecf8"></div>
<div class="a" style="left:1062px;top:645px;width:1px;height:7px;background:#e8ecf8"></div>
<div class="a" style="left:1034px;top:643px;width:5px;height:11px;background:#fff"></div>
<div class="a" style="left:1116px;top:648px;width:8px;height:2px;background:#fff"></div>
<div class="a" style="left:1119px;top:645px;width:2px;height:8px;background:#fff"></div>
<div class="t" style="left:1139px;top:643px;color:#fff;font-size:11.5px;letter-spacing:-0.2px">53%</div>
<svg style="left:1173px;top:642px" width="15" height="14" viewBox="0 0 15 14" fill="none" stroke="#fff" stroke-width="1"><rect x="1.5" y="1.5" width="12" height="11"/><path d="M4 4L6 6M11 4L9 6M4 10L6 8M11 10L9 8" /></svg>
<svg style="left:1201px;top:642px" width="16" height="14" viewBox="0 0 16 14" fill="none" stroke="#fff" stroke-width="1.2"><path d="M1 5V1H6M9 1H14V5"/><rect x="5" y="6" width="9" height="4"/><path d="M1 8V13H5M10 13H14"/></svg>
<svg style="left:0;top:681px" width="1280" height="39" viewBox="0 0 1280 39"><path d="M16 13 L23 12 V19 H16 Z M24 11.8 L33 10.5 V19 H24 Z M16 20 H23 V27 L16 26 Z M24 20 H33 V28.5 L24 27.2 Z" fill="#fff"/><rect x="409.5" y="14.5" width="13" height="12" fill="none" stroke="#fff" stroke-width="1.2"/><path d="M408 16.5H406.5V25H408M424 16.5H425.5V25H424" fill="none" stroke="#fff" stroke-width="1.1"/><path d="M474 28 Q460 33 457 21 Q456 10 467 10 Q477 11 476 20 H462 Q463 27 474 25 Z" fill="#1f7fd8"/><path d="M462 17 Q466 13 471 17 Z" fill="#0e181d"/><path d="M504 12 H512 L514 14 H526 V28 H504 Z" fill="#f2c94c"/><rect x="504" y="17" width="22" height="11" fill="#fbe08c"/><rect x="512" y="21" width="6" height="4" fill="#3aa0d8"/><path d="M508 25 H522 V28 H508 Z" fill="#3aa0d8"/><rect x="540" y="0" width="48" height="39" fill="#3a3f44"/><rect x="540" y="37" width="48" height="2" fill="#aab6dc"/><rect x="562" y="12" width="13" height="17" fill="#fff"/><path d="M552 10 L566 8 V31 L552 29 Z" fill="#3955a3"/><text x="554.5" y="24" font-family="Liberation Sans" font-weight="bold" font-size="10" fill="#fff">V</text><circle cx="570" cy="16" r="2.5" fill="none" stroke="#3955a3" stroke-width="1.3"/><path d="M570 18.5V26M568 26H572" stroke="#3955a3" stroke-width="1.2"/><rect x="611" y="12" width="13" height="17" fill="#fff"/><path d="M614 15H622M614 19H622M614 23H622M614 27H622M618 13V29" stroke="#1e7145" stroke-width="1"/><path d="M601 10 L615 8 V31 L601 29 Z" fill="#1e7145"/><text x="603.5" y="24" font-family="Liberation Sans" font-weight="bold" font-size="10" fill="#fff">X</text><rect x="660" y="12" width="13" height="17" fill="#fff"/><circle cx="666" cy="18" r="3.5" fill="none" stroke="#d24726" stroke-width="1.5"/><path d="M663 24H670M663 27H670" stroke="#d24726"/><path d="M650 10 L664 8 V31 L650 29 Z" fill="#d24726"/><text x="652.5" y="24" font-family="Liberation Sans" font-weight="bold" font-size="10" fill="#fff">P</text><rect x="709" y="12" width="13" height="17" fill="#fff"/><path d="M711 15H720M711 18H720M711 21H720M711 24H720M711 27H720" stroke="#2b579a" stroke-width="1"/><path d="M699 10 L713 8 V31 L699 29 Z" fill="#2b579a"/><text x="700" y="24" font-family="Liberation Sans" font-weight="bold" font-size="9.5" fill="#fff">W</text><path d="M1070.5 22.5 L1076 17 L1081.5 22.5" fill="none" stroke="#fff" stroke-width="1.4"/><rect x="1093" y="14.5" width="14" height="10" fill="none" stroke="#fff" stroke-width="1.2"/><path d="M1100 24.5V27.5M1096 27.5H1104" stroke="#fff" stroke-width="1.2"/><rect x="1092" y="13" width="5" height="4" fill="#0e181d" stroke="#fff" stroke-width="1"/><path d="M1116 17H1119L1123 13V27L1119 23H1116Z" fill="none" stroke="#fff" stroke-width="1.2"/><path d="M1125 17Q1127 20 1125 23M1127.5 15Q1131 20 1127.5 25M1130 13Q1135 20 1130 27" fill="none" stroke="#fff" stroke-width="1.1"/><path d="M1140 12 H1156 V25 H1150 L1148 28 L1146 25 H1140 Z" fill="#fff"/><path d="M1143 16H1153M1143 19H1153M1143 22H1150" stroke="#0e181d" stroke-width="1.1"/><rect x="1275" y="0" width="1" height="39" fill="#555"/></svg>
<div class="t" style="left:1166px;top:695px;color:#fff;font-size:12px;letter-spacing:-0.8px">ENG</div>
<div class="t" style="left:1221px;top:686px;color:#fff;font-size:12px;letter-spacing:-0.6px">09:04</div>
<div class="t" style="left:1206px;top:703px;color:#fff;font-size:12px;letter-spacing:-0.4px">05/02/2016</div>
<svg style="left:0;top:0" width="300" height="300" viewBox="0 0 300 300"><defs><clipPath id="ovc"><rect x="27" y="27" width="273" height="273"/></clipPath></defs><circle cx="109.8" cy="109.3" r="85.3" fill="#4b4b4b" fill-opacity="0.82" clip-path="url(#ovc)"/><circle cx="109.6" cy="109.6" r="43" fill="#fff"/><path d="M100.6 92.3 L125.5 109.3 L100.6 126.8 Z" fill="#6b6b6b"/></svg>
</body></html>
